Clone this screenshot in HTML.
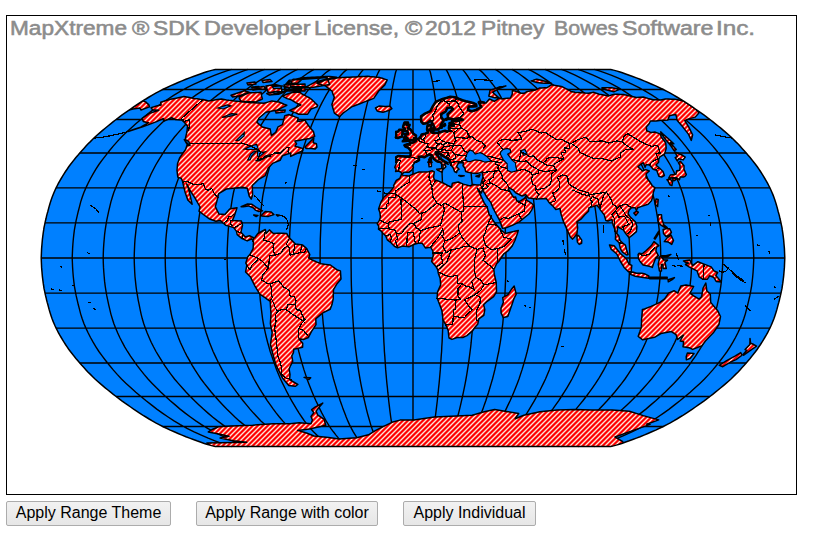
<!DOCTYPE html>
<html><head><meta charset="utf-8">
<style>
html,body{margin:0;padding:0;background:#fff;width:814px;height:537px;overflow:hidden;}
#box{position:absolute;left:6px;top:15px;width:789px;height:478px;border:1px solid #000;background:#fff;}
#title{position:absolute;left:0;top:17px;font-family:"Liberation Sans",sans-serif;font-weight:normal;-webkit-text-stroke:0.55px #8c8c8c;font-size:20px;color:#8c8c8c;white-space:nowrap;}
svg{position:absolute;left:0;top:0;}
.btn{position:absolute;top:501px;height:23px;border:1px solid #acacac;border-radius:2px;background:linear-gradient(#f2f2f2,#e6e6e6);font-family:"Liberation Sans",sans-serif;font-size:16px;color:#000;box-sizing:content-box;line-height:21px;text-align:center;white-space:nowrap;}
</style></head><body>
<div id="box"></div>
<svg width="814" height="537" viewBox="0 0 814 537">
<defs>
<pattern id="hatch" patternUnits="userSpaceOnUse" x="1" y="0" width="5" height="5">
<rect width="5" height="5" fill="#ff0000"/>
<path d="M0,5 L5,0 M-1,1 L1,-1 M4,6 L6,4" stroke="#ffe6d8" stroke-width="1.35"/>
</pattern>
<clipPath id="mapclip"><path d="M610.8,69.4 613.5,70.1 616.3,70.9 619.3,71.8 622.4,72.8 625.7,74 629.2,75.2 632.7,76.5 636.4,77.9 640.1,79.3 644,80.9 647.9,82.5 651.8,84.2 655.7,85.9 659.5,87.7 663.3,89.5 666.9,91.4 670.3,93.2 673.7,95.1 676.9,97 680.1,99 683.3,100.9 686.4,102.9 689.4,104.9 692.4,106.9 695.4,109 698.4,111.1 701.3,113.1 704.2,115.2 707.1,117.4 709.9,119.5 712.7,121.6 715.4,123.8 718.1,126 720.8,128.2 723.4,130.4 726,132.6 728.5,134.8 731,137 733.3,139.3 735.6,141.6 737.9,143.8 740,146.1 742.1,148.4 744.2,150.7 746.2,153 748.1,155.3 750.1,157.6 752,159.9 753.8,162.2 755.6,164.5 757.3,166.8 758.9,169.2 760.5,171.5 762,173.8 763.4,176.2 764.8,178.5 766.2,180.8 767.5,183.2 768.7,185.5 769.9,187.9 771,190.2 772,192.5 773,194.9 773.9,197.2 774.7,199.5 775.5,201.9 776.2,204.2 776.9,206.6 777.5,208.9 778.1,211.2 778.8,213.6 779.4,215.9 779.9,218.3 780.5,220.6 781,222.9 781.5,225.3 782,227.6 782.3,229.9 782.7,232.3 783,234.6 783.3,237 783.6,239.3 783.8,241.6 784,244 784.2,246.3 784.4,248.6 784.5,251 784.6,253.3 784.7,255.7 784.8,258 784.7,260.3 784.6,262.7 784.5,265 784.4,267.4 784.2,269.7 784,272 783.8,274.4 783.6,276.7 783.3,279 783,281.4 782.7,283.7 782.3,286.1 782,288.4 781.5,290.7 781,293.1 780.5,295.4 779.9,297.7 779.4,300.1 778.8,302.4 778.1,304.8 777.5,307.1 776.9,309.4 776.2,311.8 775.5,314.1 774.7,316.5 773.9,318.8 773,321.1 772,323.5 771,325.8 769.9,328.1 768.7,330.5 767.5,332.8 766.2,335.2 764.8,337.5 763.4,339.8 762,342.2 760.5,344.5 758.9,346.8 757.3,349.2 755.6,351.5 753.8,353.8 752,356.1 750.1,358.4 748.1,360.7 746.2,363 744.2,365.3 742.1,367.6 740,369.9 737.9,372.2 735.6,374.4 733.3,376.7 731,379 728.5,381.2 726,383.4 723.4,385.6 720.8,387.8 718.1,390 715.4,392.2 712.7,394.4 709.9,396.5 707.1,398.6 704.2,400.8 701.3,402.9 698.4,404.9 695.4,407 692.4,409.1 689.4,411.1 686.4,413.1 683.3,415.1 680.1,417 676.9,419 673.7,420.9 670.3,422.8 666.9,424.6 663.3,426.5 659.5,428.3 655.7,430.1 651.8,431.8 647.9,433.5 644,435.1 640.1,436.7 636.4,438.1 632.7,439.5 629.2,440.8 625.7,442 622.4,443.2 619.3,444.2 616.3,445.1 613.5,445.9 610.8,446.6 215.2,446.6 212.5,445.9 209.7,445.1 206.7,444.2 203.6,443.2 200.3,442 196.8,440.8 193.3,439.5 189.6,438.1 185.9,436.7 182,435.1 178.1,433.5 174.2,431.8 170.3,430.1 166.5,428.3 162.7,426.5 159.1,424.6 155.7,422.8 152.3,420.9 149.1,419 145.9,417 142.7,415.1 139.6,413.1 136.6,411.1 133.6,409.1 130.6,407 127.6,404.9 124.7,402.9 121.8,400.8 118.9,398.6 116.1,396.5 113.3,394.4 110.6,392.2 107.9,390 105.2,387.8 102.6,385.6 100,383.4 97.5,381.2 95,379 92.7,376.7 90.4,374.4 88.1,372.2 86,369.9 83.9,367.6 81.8,365.3 79.8,363 77.9,360.7 75.9,358.4 74,356.1 72.2,353.8 70.4,351.5 68.7,349.2 67.1,346.8 65.5,344.5 64,342.2 62.6,339.8 61.2,337.5 59.8,335.2 58.5,332.8 57.3,330.5 56.1,328.1 55,325.8 54,323.5 53,321.1 52.1,318.8 51.3,316.5 50.5,314.1 49.8,311.8 49.1,309.4 48.5,307.1 47.9,304.8 47.2,302.4 46.6,300.1 46.1,297.7 45.5,295.4 45,293.1 44.5,290.7 44,288.4 43.7,286.1 43.3,283.7 43,281.4 42.7,279 42.4,276.7 42.2,274.4 42,272 41.8,269.7 41.6,267.4 41.5,265 41.4,262.7 41.3,260.3 41.2,258 41.3,255.7 41.4,253.3 41.5,251 41.6,248.6 41.8,246.3 42,244 42.2,241.6 42.4,239.3 42.7,237 43,234.6 43.3,232.3 43.7,229.9 44,227.6 44.5,225.3 45,222.9 45.5,220.6 46.1,218.3 46.6,215.9 47.2,213.6 47.9,211.2 48.5,208.9 49.1,206.6 49.8,204.2 50.5,201.9 51.3,199.5 52.1,197.2 53,194.9 54,192.5 55,190.2 56.1,187.9 57.3,185.5 58.5,183.2 59.8,180.8 61.2,178.5 62.6,176.2 64,173.8 65.5,171.5 67.1,169.2 68.7,166.8 70.4,164.5 72.2,162.2 74,159.9 75.9,157.6 77.9,155.3 79.8,153 81.8,150.7 83.9,148.4 86,146.1 88.1,143.8 90.4,141.6 92.7,139.3 95,137 97.5,134.8 100,132.6 102.6,130.4 105.2,128.2 107.9,126 110.6,123.8 113.3,121.6 116.1,119.5 118.9,117.4 121.8,115.2 124.7,113.1 127.6,111.1 130.6,109 133.6,106.9 136.6,104.9 139.6,102.9 142.7,100.9 145.9,99 149.1,97 152.3,95.1 155.7,93.2 159.1,91.4 162.7,89.5 166.5,87.7 170.3,85.9 174.2,84.2 178.1,82.5 182,80.9 185.9,79.3 189.6,77.9 193.3,76.5 196.8,75.2 200.3,74 203.6,72.8 206.7,71.8 209.7,70.9 212.5,70.1 215.2,69.4Z"/></clipPath>
<clipPath id="eurclip"><rect x="395" y="88" width="90" height="75"/></clipPath>
</defs>
<path d="M610.8,69.4 613.5,70.1 616.3,70.9 619.3,71.8 622.4,72.8 625.7,74 629.2,75.2 632.7,76.5 636.4,77.9 640.1,79.3 644,80.9 647.9,82.5 651.8,84.2 655.7,85.9 659.5,87.7 663.3,89.5 666.9,91.4 670.3,93.2 673.7,95.1 676.9,97 680.1,99 683.3,100.9 686.4,102.9 689.4,104.9 692.4,106.9 695.4,109 698.4,111.1 701.3,113.1 704.2,115.2 707.1,117.4 709.9,119.5 712.7,121.6 715.4,123.8 718.1,126 720.8,128.2 723.4,130.4 726,132.6 728.5,134.8 731,137 733.3,139.3 735.6,141.6 737.9,143.8 740,146.1 742.1,148.4 744.2,150.7 746.2,153 748.1,155.3 750.1,157.6 752,159.9 753.8,162.2 755.6,164.5 757.3,166.8 758.9,169.2 760.5,171.5 762,173.8 763.4,176.2 764.8,178.5 766.2,180.8 767.5,183.2 768.7,185.5 769.9,187.9 771,190.2 772,192.5 773,194.9 773.9,197.2 774.7,199.5 775.5,201.9 776.2,204.2 776.9,206.6 777.5,208.9 778.1,211.2 778.8,213.6 779.4,215.9 779.9,218.3 780.5,220.6 781,222.9 781.5,225.3 782,227.6 782.3,229.9 782.7,232.3 783,234.6 783.3,237 783.6,239.3 783.8,241.6 784,244 784.2,246.3 784.4,248.6 784.5,251 784.6,253.3 784.7,255.7 784.8,258 784.7,260.3 784.6,262.7 784.5,265 784.4,267.4 784.2,269.7 784,272 783.8,274.4 783.6,276.7 783.3,279 783,281.4 782.7,283.7 782.3,286.1 782,288.4 781.5,290.7 781,293.1 780.5,295.4 779.9,297.7 779.4,300.1 778.8,302.4 778.1,304.8 777.5,307.1 776.9,309.4 776.2,311.8 775.5,314.1 774.7,316.5 773.9,318.8 773,321.1 772,323.5 771,325.8 769.9,328.1 768.7,330.5 767.5,332.8 766.2,335.2 764.8,337.5 763.4,339.8 762,342.2 760.5,344.5 758.9,346.8 757.3,349.2 755.6,351.5 753.8,353.8 752,356.1 750.1,358.4 748.1,360.7 746.2,363 744.2,365.3 742.1,367.6 740,369.9 737.9,372.2 735.6,374.4 733.3,376.7 731,379 728.5,381.2 726,383.4 723.4,385.6 720.8,387.8 718.1,390 715.4,392.2 712.7,394.4 709.9,396.5 707.1,398.6 704.2,400.8 701.3,402.9 698.4,404.9 695.4,407 692.4,409.1 689.4,411.1 686.4,413.1 683.3,415.1 680.1,417 676.9,419 673.7,420.9 670.3,422.8 666.9,424.6 663.3,426.5 659.5,428.3 655.7,430.1 651.8,431.8 647.9,433.5 644,435.1 640.1,436.7 636.4,438.1 632.7,439.5 629.2,440.8 625.7,442 622.4,443.2 619.3,444.2 616.3,445.1 613.5,445.9 610.8,446.6 215.2,446.6 212.5,445.9 209.7,445.1 206.7,444.2 203.6,443.2 200.3,442 196.8,440.8 193.3,439.5 189.6,438.1 185.9,436.7 182,435.1 178.1,433.5 174.2,431.8 170.3,430.1 166.5,428.3 162.7,426.5 159.1,424.6 155.7,422.8 152.3,420.9 149.1,419 145.9,417 142.7,415.1 139.6,413.1 136.6,411.1 133.6,409.1 130.6,407 127.6,404.9 124.7,402.9 121.8,400.8 118.9,398.6 116.1,396.5 113.3,394.4 110.6,392.2 107.9,390 105.2,387.8 102.6,385.6 100,383.4 97.5,381.2 95,379 92.7,376.7 90.4,374.4 88.1,372.2 86,369.9 83.9,367.6 81.8,365.3 79.8,363 77.9,360.7 75.9,358.4 74,356.1 72.2,353.8 70.4,351.5 68.7,349.2 67.1,346.8 65.5,344.5 64,342.2 62.6,339.8 61.2,337.5 59.8,335.2 58.5,332.8 57.3,330.5 56.1,328.1 55,325.8 54,323.5 53,321.1 52.1,318.8 51.3,316.5 50.5,314.1 49.8,311.8 49.1,309.4 48.5,307.1 47.9,304.8 47.2,302.4 46.6,300.1 46.1,297.7 45.5,295.4 45,293.1 44.5,290.7 44,288.4 43.7,286.1 43.3,283.7 43,281.4 42.7,279 42.4,276.7 42.2,274.4 42,272 41.8,269.7 41.6,267.4 41.5,265 41.4,262.7 41.3,260.3 41.2,258 41.3,255.7 41.4,253.3 41.5,251 41.6,248.6 41.8,246.3 42,244 42.2,241.6 42.4,239.3 42.7,237 43,234.6 43.3,232.3 43.7,229.9 44,227.6 44.5,225.3 45,222.9 45.5,220.6 46.1,218.3 46.6,215.9 47.2,213.6 47.9,211.2 48.5,208.9 49.1,206.6 49.8,204.2 50.5,201.9 51.3,199.5 52.1,197.2 53,194.9 54,192.5 55,190.2 56.1,187.9 57.3,185.5 58.5,183.2 59.8,180.8 61.2,178.5 62.6,176.2 64,173.8 65.5,171.5 67.1,169.2 68.7,166.8 70.4,164.5 72.2,162.2 74,159.9 75.9,157.6 77.9,155.3 79.8,153 81.8,150.7 83.9,148.4 86,146.1 88.1,143.8 90.4,141.6 92.7,139.3 95,137 97.5,134.8 100,132.6 102.6,130.4 105.2,128.2 107.9,126 110.6,123.8 113.3,121.6 116.1,119.5 118.9,117.4 121.8,115.2 124.7,113.1 127.6,111.1 130.6,109 133.6,106.9 136.6,104.9 139.6,102.9 142.7,100.9 145.9,99 149.1,97 152.3,95.1 155.7,93.2 159.1,91.4 162.7,89.5 166.5,87.7 170.3,85.9 174.2,84.2 178.1,82.5 182,80.9 185.9,79.3 189.6,77.9 193.3,76.5 196.8,75.2 200.3,74 203.6,72.8 206.7,71.8 209.7,70.9 212.5,70.1 215.2,69.4Z" fill="#0080ff" stroke="none"/>
<path d="M231.6,446.6 226.7,445.1 221,443.2 214.9,440.8 208.2,438.1 201.3,435.1 194.1,431.8 187,428.3 180.3,424.6 174,420.9 168.1,417 162.4,413.1 156.8,409.1 151.4,404.9 146.1,400.8 140.9,396.5 135.8,392.2 130.9,387.8 126.1,383.4 121.5,379 117.2,374.4 113.2,369.9 109.4,365.3 105.8,360.7 102.3,356.1 98.9,351.5 95.9,346.8 93.1,342.2 90.5,337.5 88.1,332.8 85.9,328.1 83.9,323.5 82.2,318.8 80.7,314.1 79.5,309.4 78.3,304.8 77.2,300.1 76.1,295.4 75.2,290.7 74.4,286.1 73.8,281.4 73.3,276.7 72.9,272 72.6,267.4 72.4,262.7 72.2,258 72.4,253.3 72.6,248.6 72.9,244 73.3,239.3 73.8,234.6 74.4,229.9 75.2,225.3 76.1,220.6 77.2,215.9 78.3,211.2 79.5,206.6 80.7,201.9 82.2,197.2 83.9,192.5 85.9,187.9 88.1,183.2 90.5,178.5 93.1,173.8 95.9,169.2 98.9,164.5 102.3,159.9 105.8,155.3 109.4,150.7 113.2,146.1 117.2,141.6 121.5,137 126.1,132.6 130.9,128.2 135.8,123.8 140.9,119.5 146.1,115.2 151.4,111.1 156.8,106.9 162.4,102.9 168.1,99 174,95.1 180.3,91.4 187,87.7 194.1,84.2 201.3,80.9 208.2,77.9 214.9,75.2 221,72.8 226.7,70.9 231.6,69.4 M248.1,446.6 243.6,445.1 238.5,443.2 232.9,440.8 226.9,438.1 220.5,435.1 214,431.8 207.6,428.3 201.5,424.6 195.8,420.9 190.4,417 185.2,413.1 180.1,409.1 175.2,404.9 170.3,400.8 165.6,396.5 161,392.2 156.5,387.8 152.2,383.4 148,379 144.1,374.4 140.5,369.9 137,365.3 133.7,360.7 130.5,356.1 127.5,351.5 124.7,346.8 122.2,342.2 119.8,337.5 117.6,332.8 115.6,328.1 113.8,323.5 112.3,318.8 110.9,314.1 109.8,309.4 108.7,304.8 107.7,300.1 106.7,295.4 105.9,290.7 105.2,286.1 104.6,281.4 104.2,276.7 103.8,272 103.5,267.4 103.3,262.7 103.2,258 103.3,253.3 103.5,248.6 103.8,244 104.2,239.3 104.6,234.6 105.2,229.9 105.9,225.3 106.7,220.6 107.7,215.9 108.7,211.2 109.8,206.6 110.9,201.9 112.3,197.2 113.8,192.5 115.6,187.9 117.6,183.2 119.8,178.5 122.2,173.8 124.7,169.2 127.5,164.5 130.5,159.9 133.7,155.3 137,150.7 140.5,146.1 144.1,141.6 148,137 152.2,132.6 156.5,128.2 161,123.8 165.6,119.5 170.3,115.2 175.2,111.1 180.1,106.9 185.2,102.9 190.4,99 195.8,95.1 201.5,91.4 207.6,87.7 214,84.2 220.5,80.9 226.9,77.9 232.9,75.2 238.5,72.8 243.6,70.9 248.1,69.4 M264.6,446.6 260.5,445.1 255.9,443.2 250.9,440.8 245.5,438.1 239.8,435.1 233.9,431.8 228.1,428.3 222.6,424.6 217.5,420.9 212.6,417 208,413.1 203.4,409.1 199,404.9 194.6,400.8 190.3,396.5 186.2,392.2 182.2,387.8 178.3,383.4 174.5,379 171,374.4 167.7,369.9 164.6,365.3 161.6,360.7 158.8,356.1 156,351.5 153.5,346.8 151.2,342.2 149.1,337.5 147.1,332.8 145.3,328.1 143.7,323.5 142.3,318.8 141.1,314.1 140.1,309.4 139.2,304.8 138.2,300.1 137.4,295.4 136.6,290.7 136,286.1 135.5,281.4 135,276.7 134.7,272 134.5,267.4 134.3,262.7 134.2,258 134.3,253.3 134.5,248.6 134.7,244 135,239.3 135.5,234.6 136,229.9 136.6,225.3 137.4,220.6 138.2,215.9 139.2,211.2 140.1,206.6 141.1,201.9 142.3,197.2 143.7,192.5 145.3,187.9 147.1,183.2 149.1,178.5 151.2,173.8 153.5,169.2 156,164.5 158.8,159.9 161.6,155.3 164.6,150.7 167.7,146.1 171,141.6 174.5,137 178.3,132.6 182.2,128.2 186.2,123.8 190.3,119.5 194.6,115.2 199,111.1 203.4,106.9 208,102.9 212.6,99 217.5,95.1 222.6,91.4 228.1,87.7 233.9,84.2 239.8,80.9 245.5,77.9 250.9,75.2 255.9,72.8 260.5,70.9 264.6,69.4 M281.1,446.6 277.5,445.1 273.4,443.2 268.9,440.8 264.1,438.1 259,435.1 253.8,431.8 248.6,428.3 243.8,424.6 239.2,420.9 234.9,417 230.8,413.1 226.7,409.1 222.8,404.9 218.9,400.8 215.1,396.5 211.4,392.2 207.8,387.8 204.3,383.4 201,379 197.9,374.4 195,369.9 192.2,365.3 189.6,360.7 187,356.1 184.6,351.5 182.4,346.8 180.3,342.2 178.4,337.5 176.7,332.8 175.1,328.1 173.7,323.5 172.4,318.8 171.3,314.1 170.4,309.4 169.6,304.8 168.8,300.1 168,295.4 167.3,290.7 166.8,286.1 166.3,281.4 165.9,276.7 165.6,272 165.4,267.4 165.3,262.7 165.2,258 165.3,253.3 165.4,248.6 165.6,244 165.9,239.3 166.3,234.6 166.8,229.9 167.3,225.3 168,220.6 168.8,215.9 169.6,211.2 170.4,206.6 171.3,201.9 172.4,197.2 173.7,192.5 175.1,187.9 176.7,183.2 178.4,178.5 180.3,173.8 182.4,169.2 184.6,164.5 187,159.9 189.6,155.3 192.2,150.7 195,146.1 197.9,141.6 201,137 204.3,132.6 207.8,128.2 211.4,123.8 215.1,119.5 218.9,115.2 222.8,111.1 226.7,106.9 230.8,102.9 234.9,99 239.2,95.1 243.8,91.4 248.6,87.7 253.8,84.2 259,80.9 264.1,77.9 268.9,75.2 273.4,72.8 277.5,70.9 281.1,69.4 M297.6,446.6 294.4,445.1 290.8,443.2 286.9,440.8 282.7,438.1 278.3,435.1 273.7,431.8 269.2,428.3 264.9,424.6 260.9,420.9 257.2,417 253.5,413.1 250,409.1 246.5,404.9 243.1,400.8 239.8,396.5 236.6,392.2 233.5,387.8 230.4,383.4 227.5,379 224.8,374.4 222.2,369.9 219.8,365.3 217.5,360.7 215.3,356.1 213.1,351.5 211.2,346.8 209.4,342.2 207.8,337.5 206.2,332.8 204.8,328.1 203.6,323.5 202.5,318.8 201.6,314.1 200.7,309.4 200,304.8 199.3,300.1 198.6,295.4 198,290.7 197.5,286.1 197.1,281.4 196.8,276.7 196.6,272 196.4,267.4 196.2,262.7 196.1,258 196.2,253.3 196.4,248.6 196.6,244 196.8,239.3 197.1,234.6 197.5,229.9 198,225.3 198.6,220.6 199.3,215.9 200,211.2 200.7,206.6 201.6,201.9 202.5,197.2 203.6,192.5 204.8,187.9 206.2,183.2 207.8,178.5 209.4,173.8 211.2,169.2 213.1,164.5 215.3,159.9 217.5,155.3 219.8,150.7 222.2,146.1 224.8,141.6 227.5,137 230.4,132.6 233.5,128.2 236.6,123.8 239.8,119.5 243.1,115.2 246.5,111.1 250,106.9 253.5,102.9 257.2,99 260.9,95.1 264.9,91.4 269.2,87.7 273.7,84.2 278.3,80.9 282.7,77.9 286.9,75.2 290.8,72.8 294.4,70.9 297.6,69.4 M314.1,446.6 311.4,445.1 308.3,443.2 304.9,440.8 301.3,438.1 297.5,435.1 293.6,431.8 289.7,428.3 286.1,424.6 282.7,420.9 279.4,417 276.3,413.1 273.3,409.1 270.3,404.9 267.4,400.8 264.6,396.5 261.8,392.2 259.1,387.8 256.5,383.4 254,379 251.7,374.4 249.5,369.9 247.4,365.3 245.4,360.7 243.5,356.1 241.7,351.5 240,346.8 238.5,342.2 237.1,337.5 235.8,332.8 234.6,328.1 233.5,323.5 232.6,318.8 231.8,314.1 231.1,309.4 230.4,304.8 229.8,300.1 229.2,295.4 228.7,290.7 228.3,286.1 228,281.4 227.7,276.7 227.5,272 227.3,267.4 227.2,262.7 227.1,258 227.2,253.3 227.3,248.6 227.5,244 227.7,239.3 228,234.6 228.3,229.9 228.7,225.3 229.2,220.6 229.8,215.9 230.4,211.2 231.1,206.6 231.8,201.9 232.6,197.2 233.5,192.5 234.6,187.9 235.8,183.2 237.1,178.5 238.5,173.8 240,169.2 241.7,164.5 243.5,159.9 245.4,155.3 247.4,150.7 249.5,146.1 251.7,141.6 254,137 256.5,132.6 259.1,128.2 261.8,123.8 264.6,119.5 267.4,115.2 270.3,111.1 273.3,106.9 276.3,102.9 279.4,99 282.7,95.1 286.1,91.4 289.7,87.7 293.6,84.2 297.5,80.9 301.3,77.9 304.9,75.2 308.3,72.8 311.4,70.9 314.1,69.4 M330.6,446.6 328.3,445.1 325.7,443.2 322.9,440.8 319.9,438.1 316.8,435.1 313.5,431.8 310.3,428.3 307.2,424.6 304.4,420.9 301.7,417 299.1,413.1 296.6,409.1 294.1,404.9 291.7,400.8 289.3,396.5 287,392.2 284.8,387.8 282.6,383.4 280.5,379 278.6,374.4 276.7,369.9 275,365.3 273.4,360.7 271.8,356.1 270.2,351.5 268.9,346.8 267.6,342.2 266.4,337.5 265.3,332.8 264.3,328.1 263.4,323.5 262.6,318.8 262,314.1 261.4,309.4 260.9,304.8 260.3,300.1 259.9,295.4 259.5,290.7 259.1,286.1 258.8,281.4 258.6,276.7 258.4,272 258.3,267.4 258.2,262.7 258.1,258 258.2,253.3 258.3,248.6 258.4,244 258.6,239.3 258.8,234.6 259.1,229.9 259.5,225.3 259.9,220.6 260.3,215.9 260.9,211.2 261.4,206.6 262,201.9 262.6,197.2 263.4,192.5 264.3,187.9 265.3,183.2 266.4,178.5 267.6,173.8 268.9,169.2 270.2,164.5 271.8,159.9 273.4,155.3 275,150.7 276.7,146.1 278.6,141.6 280.5,137 282.6,132.6 284.8,128.2 287,123.8 289.3,119.5 291.7,115.2 294.1,111.1 296.6,106.9 299.1,102.9 301.7,99 304.4,95.1 307.2,91.4 310.3,87.7 313.5,84.2 316.8,80.9 319.9,77.9 322.9,75.2 325.7,72.8 328.3,70.9 330.6,69.4 M347.1,446.6 345.2,445.1 343.2,443.2 340.9,440.8 338.5,438.1 336,435.1 333.4,431.8 330.8,428.3 328.4,424.6 326.1,420.9 324,417 321.9,413.1 319.9,409.1 317.9,404.9 315.9,400.8 314,396.5 312.2,392.2 310.4,387.8 308.7,383.4 307,379 305.5,374.4 304,369.9 302.6,365.3 301.3,360.7 300,356.1 298.8,351.5 297.7,346.8 296.7,342.2 295.7,337.5 294.8,332.8 294,328.1 293.3,323.5 292.7,318.8 292.2,314.1 291.7,309.4 291.3,304.8 290.9,300.1 290.5,295.4 290.2,290.7 289.9,286.1 289.7,281.4 289.5,276.7 289.3,272 289.2,267.4 289.1,262.7 289.1,258 289.1,253.3 289.2,248.6 289.3,244 289.5,239.3 289.7,234.6 289.9,229.9 290.2,225.3 290.5,220.6 290.9,215.9 291.3,211.2 291.7,206.6 292.2,201.9 292.7,197.2 293.3,192.5 294,187.9 294.8,183.2 295.7,178.5 296.7,173.8 297.7,169.2 298.8,164.5 300,159.9 301.3,155.3 302.6,150.7 304,146.1 305.5,141.6 307,137 308.7,132.6 310.4,128.2 312.2,123.8 314,119.5 315.9,115.2 317.9,111.1 319.9,106.9 321.9,102.9 324,99 326.1,95.1 328.4,91.4 330.8,87.7 333.4,84.2 336,80.9 338.5,77.9 340.9,75.2 343.2,72.8 345.2,70.9 347.1,69.4 M363.5,446.6 362.2,445.1 360.6,443.2 359,440.8 357.2,438.1 355.3,435.1 353.3,431.8 351.4,428.3 349.5,424.6 347.8,420.9 346.2,417 344.7,413.1 343.1,409.1 341.7,404.9 340.2,400.8 338.8,396.5 337.4,392.2 336.1,387.8 334.8,383.4 333.5,379 332.3,374.4 331.2,369.9 330.2,365.3 329.2,360.7 328.3,356.1 327.3,351.5 326.5,346.8 325.7,342.2 325,337.5 324.4,332.8 323.8,328.1 323.2,323.5 322.8,318.8 322.4,314.1 322,309.4 321.7,304.8 321.4,300.1 321.1,295.4 320.9,290.7 320.7,286.1 320.5,281.4 320.3,276.7 320.2,272 320.2,267.4 320.1,262.7 320.1,258 320.1,253.3 320.2,248.6 320.2,244 320.3,239.3 320.5,234.6 320.7,229.9 320.9,225.3 321.1,220.6 321.4,215.9 321.7,211.2 322,206.6 322.4,201.9 322.8,197.2 323.2,192.5 323.8,187.9 324.4,183.2 325,178.5 325.7,173.8 326.5,169.2 327.3,164.5 328.3,159.9 329.2,155.3 330.2,150.7 331.2,146.1 332.3,141.6 333.5,137 334.8,132.6 336.1,128.2 337.4,123.8 338.8,119.5 340.2,115.2 341.7,111.1 343.1,106.9 344.7,102.9 346.2,99 347.8,95.1 349.5,91.4 351.4,87.7 353.3,84.2 355.3,80.9 357.2,77.9 359,75.2 360.6,72.8 362.2,70.9 363.5,69.4 M380,446.6 379.1,445.1 378.1,443.2 377,440.8 375.8,438.1 374.5,435.1 373.2,431.8 371.9,428.3 370.7,424.6 369.6,420.9 368.5,417 367.4,413.1 366.4,409.1 365.4,404.9 364.5,400.8 363.5,396.5 362.6,392.2 361.7,387.8 360.8,383.4 360,379 359.2,374.4 358.5,369.9 357.8,365.3 357.1,360.7 356.5,356.1 355.9,351.5 355.3,346.8 354.8,342.2 354.4,337.5 353.9,332.8 353.5,328.1 353.2,323.5 352.9,318.8 352.6,314.1 352.4,309.4 352.1,304.8 351.9,300.1 351.7,295.4 351.6,290.7 351.4,286.1 351.3,281.4 351.2,276.7 351.2,272 351.1,267.4 351.1,262.7 351,258 351.1,253.3 351.1,248.6 351.2,244 351.2,239.3 351.3,234.6 351.4,229.9 351.6,225.3 351.7,220.6 351.9,215.9 352.1,211.2 352.4,206.6 352.6,201.9 352.9,197.2 353.2,192.5 353.5,187.9 353.9,183.2 354.4,178.5 354.8,173.8 355.3,169.2 355.9,164.5 356.5,159.9 357.1,155.3 357.8,150.7 358.5,146.1 359.2,141.6 360,137 360.8,132.6 361.7,128.2 362.6,123.8 363.5,119.5 364.5,115.2 365.4,111.1 366.4,106.9 367.4,102.9 368.5,99 369.6,95.1 370.7,91.4 371.9,87.7 373.2,84.2 374.5,80.9 375.8,77.9 377,75.2 378.1,72.8 379.1,70.9 380,69.4 M396.5,446.6 396.1,445.1 395.5,443.2 395,440.8 394.4,438.1 393.8,435.1 393.1,431.8 392.5,428.3 391.8,424.6 391.3,420.9 390.7,417 390.2,413.1 389.7,409.1 389.2,404.9 388.7,400.8 388.3,396.5 387.8,392.2 387.4,387.8 386.9,383.4 386.5,379 386.1,374.4 385.7,369.9 385.4,365.3 385.1,360.7 384.8,356.1 384.4,351.5 384.2,346.8 383.9,342.2 383.7,337.5 383.5,332.8 383.3,328.1 383.1,323.5 382.9,318.8 382.8,314.1 382.7,309.4 382.6,304.8 382.5,300.1 382.4,295.4 382.3,290.7 382.2,286.1 382.2,281.4 382.1,276.7 382.1,272 382.1,267.4 382,262.7 382,258 382,253.3 382.1,248.6 382.1,244 382.1,239.3 382.2,234.6 382.2,229.9 382.3,225.3 382.4,220.6 382.5,215.9 382.6,211.2 382.7,206.6 382.8,201.9 382.9,197.2 383.1,192.5 383.3,187.9 383.5,183.2 383.7,178.5 383.9,173.8 384.2,169.2 384.4,164.5 384.8,159.9 385.1,155.3 385.4,150.7 385.7,146.1 386.1,141.6 386.5,137 386.9,132.6 387.4,128.2 387.8,123.8 388.3,119.5 388.7,115.2 389.2,111.1 389.7,106.9 390.2,102.9 390.7,99 391.3,95.1 391.8,91.4 392.5,87.7 393.1,84.2 393.8,80.9 394.4,77.9 395,75.2 395.5,72.8 396.1,70.9 396.5,69.4 M413,446.6 413,445.1 413,443.2 413,440.8 413,438.1 413,435.1 413,431.8 413,428.3 413,424.6 413,420.9 413,417 413,413.1 413,409.1 413,404.9 413,400.8 413,396.5 413,392.2 413,387.8 413,383.4 413,379 413,374.4 413,369.9 413,365.3 413,360.7 413,356.1 413,351.5 413,346.8 413,342.2 413,337.5 413,332.8 413,328.1 413,323.5 413,318.8 413,314.1 413,309.4 413,304.8 413,300.1 413,295.4 413,290.7 413,286.1 413,281.4 413,276.7 413,272 413,267.4 413,262.7 413,258 413,253.3 413,248.6 413,244 413,239.3 413,234.6 413,229.9 413,225.3 413,220.6 413,215.9 413,211.2 413,206.6 413,201.9 413,197.2 413,192.5 413,187.9 413,183.2 413,178.5 413,173.8 413,169.2 413,164.5 413,159.9 413,155.3 413,150.7 413,146.1 413,141.6 413,137 413,132.6 413,128.2 413,123.8 413,119.5 413,115.2 413,111.1 413,106.9 413,102.9 413,99 413,95.1 413,91.4 413,87.7 413,84.2 413,80.9 413,77.9 413,75.2 413,72.8 413,70.9 413,69.4 M429.5,446.6 429.9,445.1 430.5,443.2 431,440.8 431.6,438.1 432.2,435.1 432.9,431.8 433.5,428.3 434.2,424.6 434.7,420.9 435.3,417 435.8,413.1 436.3,409.1 436.8,404.9 437.3,400.8 437.7,396.5 438.2,392.2 438.6,387.8 439.1,383.4 439.5,379 439.9,374.4 440.3,369.9 440.6,365.3 440.9,360.7 441.2,356.1 441.6,351.5 441.8,346.8 442.1,342.2 442.3,337.5 442.5,332.8 442.7,328.1 442.9,323.5 443.1,318.8 443.2,314.1 443.3,309.4 443.4,304.8 443.5,300.1 443.6,295.4 443.7,290.7 443.8,286.1 443.8,281.4 443.9,276.7 443.9,272 443.9,267.4 444,262.7 444,258 444,253.3 443.9,248.6 443.9,244 443.9,239.3 443.8,234.6 443.8,229.9 443.7,225.3 443.6,220.6 443.5,215.9 443.4,211.2 443.3,206.6 443.2,201.9 443.1,197.2 442.9,192.5 442.7,187.9 442.5,183.2 442.3,178.5 442.1,173.8 441.8,169.2 441.6,164.5 441.2,159.9 440.9,155.3 440.6,150.7 440.3,146.1 439.9,141.6 439.5,137 439.1,132.6 438.6,128.2 438.2,123.8 437.7,119.5 437.3,115.2 436.8,111.1 436.3,106.9 435.8,102.9 435.3,99 434.7,95.1 434.2,91.4 433.5,87.7 432.9,84.2 432.2,80.9 431.6,77.9 431,75.2 430.5,72.8 429.9,70.9 429.5,69.4 M446,446.6 446.9,445.1 447.9,443.2 449,440.8 450.2,438.1 451.5,435.1 452.8,431.8 454.1,428.3 455.3,424.6 456.4,420.9 457.5,417 458.6,413.1 459.6,409.1 460.6,404.9 461.5,400.8 462.5,396.5 463.4,392.2 464.3,387.8 465.2,383.4 466,379 466.8,374.4 467.5,369.9 468.2,365.3 468.9,360.7 469.5,356.1 470.1,351.5 470.7,346.8 471.2,342.2 471.6,337.5 472.1,332.8 472.5,328.1 472.8,323.5 473.1,318.8 473.4,314.1 473.6,309.4 473.9,304.8 474.1,300.1 474.3,295.4 474.4,290.7 474.6,286.1 474.7,281.4 474.8,276.7 474.8,272 474.9,267.4 474.9,262.7 475,258 474.9,253.3 474.9,248.6 474.8,244 474.8,239.3 474.7,234.6 474.6,229.9 474.4,225.3 474.3,220.6 474.1,215.9 473.9,211.2 473.6,206.6 473.4,201.9 473.1,197.2 472.8,192.5 472.5,187.9 472.1,183.2 471.6,178.5 471.2,173.8 470.7,169.2 470.1,164.5 469.5,159.9 468.9,155.3 468.2,150.7 467.5,146.1 466.8,141.6 466,137 465.2,132.6 464.3,128.2 463.4,123.8 462.5,119.5 461.5,115.2 460.6,111.1 459.6,106.9 458.6,102.9 457.5,99 456.4,95.1 455.3,91.4 454.1,87.7 452.8,84.2 451.5,80.9 450.2,77.9 449,75.2 447.9,72.8 446.9,70.9 446,69.4 M462.5,446.6 463.8,445.1 465.4,443.2 467,440.8 468.8,438.1 470.7,435.1 472.7,431.8 474.6,428.3 476.5,424.6 478.2,420.9 479.8,417 481.3,413.1 482.9,409.1 484.3,404.9 485.8,400.8 487.2,396.5 488.6,392.2 489.9,387.8 491.2,383.4 492.5,379 493.7,374.4 494.8,369.9 495.8,365.3 496.8,360.7 497.7,356.1 498.7,351.5 499.5,346.8 500.3,342.2 501,337.5 501.6,332.8 502.2,328.1 502.8,323.5 503.2,318.8 503.6,314.1 504,309.4 504.3,304.8 504.6,300.1 504.9,295.4 505.1,290.7 505.3,286.1 505.5,281.4 505.7,276.7 505.8,272 505.8,267.4 505.9,262.7 505.9,258 505.9,253.3 505.8,248.6 505.8,244 505.7,239.3 505.5,234.6 505.3,229.9 505.1,225.3 504.9,220.6 504.6,215.9 504.3,211.2 504,206.6 503.6,201.9 503.2,197.2 502.8,192.5 502.2,187.9 501.6,183.2 501,178.5 500.3,173.8 499.5,169.2 498.7,164.5 497.7,159.9 496.8,155.3 495.8,150.7 494.8,146.1 493.7,141.6 492.5,137 491.2,132.6 489.9,128.2 488.6,123.8 487.2,119.5 485.8,115.2 484.3,111.1 482.9,106.9 481.3,102.9 479.8,99 478.2,95.1 476.5,91.4 474.6,87.7 472.7,84.2 470.7,80.9 468.8,77.9 467,75.2 465.4,72.8 463.8,70.9 462.5,69.4 M478.9,446.6 480.8,445.1 482.8,443.2 485.1,440.8 487.5,438.1 490,435.1 492.6,431.8 495.2,428.3 497.6,424.6 499.9,420.9 502,417 504.1,413.1 506.1,409.1 508.1,404.9 510.1,400.8 512,396.5 513.8,392.2 515.6,387.8 517.3,383.4 519,379 520.5,374.4 522,369.9 523.4,365.3 524.7,360.7 526,356.1 527.2,351.5 528.3,346.8 529.3,342.2 530.3,337.5 531.2,332.8 532,328.1 532.7,323.5 533.3,318.8 533.8,314.1 534.3,309.4 534.7,304.8 535.1,300.1 535.5,295.4 535.8,290.7 536.1,286.1 536.3,281.4 536.5,276.7 536.7,272 536.8,267.4 536.9,262.7 536.9,258 536.9,253.3 536.8,248.6 536.7,244 536.5,239.3 536.3,234.6 536.1,229.9 535.8,225.3 535.5,220.6 535.1,215.9 534.7,211.2 534.3,206.6 533.8,201.9 533.3,197.2 532.7,192.5 532,187.9 531.2,183.2 530.3,178.5 529.3,173.8 528.3,169.2 527.2,164.5 526,159.9 524.7,155.3 523.4,150.7 522,146.1 520.5,141.6 519,137 517.3,132.6 515.6,128.2 513.8,123.8 512,119.5 510.1,115.2 508.1,111.1 506.1,106.9 504.1,102.9 502,99 499.9,95.1 497.6,91.4 495.2,87.7 492.6,84.2 490,80.9 487.5,77.9 485.1,75.2 482.8,72.8 480.8,70.9 478.9,69.4 M495.4,446.6 497.7,445.1 500.3,443.2 503.1,440.8 506.1,438.1 509.2,435.1 512.5,431.8 515.7,428.3 518.8,424.6 521.6,420.9 524.3,417 526.9,413.1 529.4,409.1 531.9,404.9 534.3,400.8 536.7,396.5 539,392.2 541.2,387.8 543.4,383.4 545.5,379 547.4,374.4 549.3,369.9 551,365.3 552.6,360.7 554.2,356.1 555.8,351.5 557.1,346.8 558.4,342.2 559.6,337.5 560.7,332.8 561.7,328.1 562.6,323.5 563.4,318.8 564,314.1 564.6,309.4 565.1,304.8 565.7,300.1 566.1,295.4 566.5,290.7 566.9,286.1 567.2,281.4 567.4,276.7 567.6,272 567.7,267.4 567.8,262.7 567.9,258 567.8,253.3 567.7,248.6 567.6,244 567.4,239.3 567.2,234.6 566.9,229.9 566.5,225.3 566.1,220.6 565.7,215.9 565.1,211.2 564.6,206.6 564,201.9 563.4,197.2 562.6,192.5 561.7,187.9 560.7,183.2 559.6,178.5 558.4,173.8 557.1,169.2 555.8,164.5 554.2,159.9 552.6,155.3 551,150.7 549.3,146.1 547.4,141.6 545.5,137 543.4,132.6 541.2,128.2 539,123.8 536.7,119.5 534.3,115.2 531.9,111.1 529.4,106.9 526.9,102.9 524.3,99 521.6,95.1 518.8,91.4 515.7,87.7 512.5,84.2 509.2,80.9 506.1,77.9 503.1,75.2 500.3,72.8 497.7,70.9 495.4,69.4 M511.9,446.6 514.6,445.1 517.7,443.2 521.1,440.8 524.7,438.1 528.5,435.1 532.4,431.8 536.3,428.3 539.9,424.6 543.3,420.9 546.6,417 549.7,413.1 552.7,409.1 555.7,404.9 558.6,400.8 561.4,396.5 564.2,392.2 566.9,387.8 569.5,383.4 572,379 574.3,374.4 576.5,369.9 578.6,365.3 580.6,360.7 582.5,356.1 584.3,351.5 586,346.8 587.5,342.2 588.9,337.5 590.2,332.8 591.4,328.1 592.5,323.5 593.4,318.8 594.2,314.1 594.9,309.4 595.6,304.8 596.2,300.1 596.8,295.4 597.3,290.7 597.7,286.1 598,281.4 598.3,276.7 598.5,272 598.7,267.4 598.8,262.7 598.9,258 598.8,253.3 598.7,248.6 598.5,244 598.3,239.3 598,234.6 597.7,229.9 597.3,225.3 596.8,220.6 596.2,215.9 595.6,211.2 594.9,206.6 594.2,201.9 593.4,197.2 592.5,192.5 591.4,187.9 590.2,183.2 588.9,178.5 587.5,173.8 586,169.2 584.3,164.5 582.5,159.9 580.6,155.3 578.6,150.7 576.5,146.1 574.3,141.6 572,137 569.5,132.6 566.9,128.2 564.2,123.8 561.4,119.5 558.6,115.2 555.7,111.1 552.7,106.9 549.7,102.9 546.6,99 543.3,95.1 539.9,91.4 536.3,87.7 532.4,84.2 528.5,80.9 524.7,77.9 521.1,75.2 517.7,72.8 514.6,70.9 511.9,69.4 M528.4,446.6 531.6,445.1 535.2,443.2 539.1,440.8 543.3,438.1 547.7,435.1 552.3,431.8 556.8,428.3 561.1,424.6 565.1,420.9 568.8,417 572.5,413.1 576,409.1 579.5,404.9 582.9,400.8 586.2,396.5 589.4,392.2 592.5,387.8 595.6,383.4 598.5,379 601.2,374.4 603.8,369.9 606.2,365.3 608.5,360.7 610.7,356.1 612.9,351.5 614.8,346.8 616.6,342.2 618.2,337.5 619.8,332.8 621.2,328.1 622.4,323.5 623.5,318.8 624.4,314.1 625.3,309.4 626,304.8 626.7,300.1 627.4,295.4 628,290.7 628.5,286.1 628.9,281.4 629.2,276.7 629.4,272 629.6,267.4 629.8,262.7 629.9,258 629.8,253.3 629.6,248.6 629.4,244 629.2,239.3 628.9,234.6 628.5,229.9 628,225.3 627.4,220.6 626.7,215.9 626,211.2 625.3,206.6 624.4,201.9 623.5,197.2 622.4,192.5 621.2,187.9 619.8,183.2 618.2,178.5 616.6,173.8 614.8,169.2 612.9,164.5 610.7,159.9 608.5,155.3 606.2,150.7 603.8,146.1 601.2,141.6 598.5,137 595.6,132.6 592.5,128.2 589.4,123.8 586.2,119.5 582.9,115.2 579.5,111.1 576,106.9 572.5,102.9 568.8,99 565.1,95.1 561.1,91.4 556.8,87.7 552.3,84.2 547.7,80.9 543.3,77.9 539.1,75.2 535.2,72.8 531.6,70.9 528.4,69.4 M544.9,446.6 548.5,445.1 552.6,443.2 557.1,440.8 561.9,438.1 567,435.1 572.2,431.8 577.4,428.3 582.2,424.6 586.8,420.9 591.1,417 595.2,413.1 599.3,409.1 603.2,404.9 607.1,400.8 610.9,396.5 614.6,392.2 618.2,387.8 621.7,383.4 625,379 628.1,374.4 631,369.9 633.8,365.3 636.4,360.7 639,356.1 641.4,351.5 643.6,346.8 645.7,342.2 647.6,337.5 649.3,332.8 650.9,328.1 652.3,323.5 653.6,318.8 654.7,314.1 655.6,309.4 656.4,304.8 657.2,300.1 658,295.4 658.7,290.7 659.2,286.1 659.7,281.4 660.1,276.7 660.4,272 660.6,267.4 660.7,262.7 660.8,258 660.7,253.3 660.6,248.6 660.4,244 660.1,239.3 659.7,234.6 659.2,229.9 658.7,225.3 658,220.6 657.2,215.9 656.4,211.2 655.6,206.6 654.7,201.9 653.6,197.2 652.3,192.5 650.9,187.9 649.3,183.2 647.6,178.5 645.7,173.8 643.6,169.2 641.4,164.5 639,159.9 636.4,155.3 633.8,150.7 631,146.1 628.1,141.6 625,137 621.7,132.6 618.2,128.2 614.6,123.8 610.9,119.5 607.1,115.2 603.2,111.1 599.3,106.9 595.2,102.9 591.1,99 586.8,95.1 582.2,91.4 577.4,87.7 572.2,84.2 567,80.9 561.9,77.9 557.1,75.2 552.6,72.8 548.5,70.9 544.9,69.4 M561.4,446.6 565.5,445.1 570.1,443.2 575.1,440.8 580.5,438.1 586.2,435.1 592.1,431.8 597.9,428.3 603.4,424.6 608.5,420.9 613.4,417 618,413.1 622.6,409.1 627,404.9 631.4,400.8 635.7,396.5 639.8,392.2 643.8,387.8 647.7,383.4 651.5,379 655,374.4 658.3,369.9 661.4,365.3 664.4,360.7 667.2,356.1 670,351.5 672.5,346.8 674.8,342.2 676.9,337.5 678.9,332.8 680.7,328.1 682.3,323.5 683.7,318.8 684.9,314.1 685.9,309.4 686.8,304.8 687.8,300.1 688.6,295.4 689.4,290.7 690,286.1 690.5,281.4 691,276.7 691.3,272 691.5,267.4 691.7,262.7 691.8,258 691.7,253.3 691.5,248.6 691.3,244 691,239.3 690.5,234.6 690,229.9 689.4,225.3 688.6,220.6 687.8,215.9 686.8,211.2 685.9,206.6 684.9,201.9 683.7,197.2 682.3,192.5 680.7,187.9 678.9,183.2 676.9,178.5 674.8,173.8 672.5,169.2 670,164.5 667.2,159.9 664.4,155.3 661.4,150.7 658.3,146.1 655,141.6 651.5,137 647.7,132.6 643.8,128.2 639.8,123.8 635.7,119.5 631.4,115.2 627,111.1 622.6,106.9 618,102.9 613.4,99 608.5,95.1 603.4,91.4 597.9,87.7 592.1,84.2 586.2,80.9 580.5,77.9 575.1,75.2 570.1,72.8 565.5,70.9 561.4,69.4 M577.9,446.6 582.4,445.1 587.5,443.2 593.1,440.8 599.1,438.1 605.5,435.1 612,431.8 618.4,428.3 624.5,424.6 630.2,420.9 635.6,417 640.8,413.1 645.9,409.1 650.8,404.9 655.7,400.8 660.4,396.5 665,392.2 669.5,387.8 673.8,383.4 678,379 681.9,374.4 685.5,369.9 689,365.3 692.3,360.7 695.5,356.1 698.5,351.5 701.3,346.8 703.8,342.2 706.2,337.5 708.4,332.8 710.4,328.1 712.2,323.5 713.7,318.8 715.1,314.1 716.2,309.4 717.3,304.8 718.3,300.1 719.3,295.4 720.1,290.7 720.8,286.1 721.4,281.4 721.8,276.7 722.2,272 722.5,267.4 722.7,262.7 722.8,258 722.7,253.3 722.5,248.6 722.2,244 721.8,239.3 721.4,234.6 720.8,229.9 720.1,225.3 719.3,220.6 718.3,215.9 717.3,211.2 716.2,206.6 715.1,201.9 713.7,197.2 712.2,192.5 710.4,187.9 708.4,183.2 706.2,178.5 703.8,173.8 701.3,169.2 698.5,164.5 695.5,159.9 692.3,155.3 689,150.7 685.5,146.1 681.9,141.6 678,137 673.8,132.6 669.5,128.2 665,123.8 660.4,119.5 655.7,115.2 650.8,111.1 645.9,106.9 640.8,102.9 635.6,99 630.2,95.1 624.5,91.4 618.4,87.7 612,84.2 605.5,80.9 599.1,77.9 593.1,75.2 587.5,72.8 582.4,70.9 577.9,69.4 M594.4,446.6 599.3,445.1 605,443.2 611.1,440.8 617.8,438.1 624.7,435.1 631.9,431.8 639,428.3 645.7,424.6 652,420.9 657.9,417 663.6,413.1 669.2,409.1 674.6,404.9 679.9,400.8 685.1,396.5 690.2,392.2 695.1,387.8 699.9,383.4 704.5,379 708.8,374.4 712.8,369.9 716.6,365.3 720.2,360.7 723.7,356.1 727.1,351.5 730.1,346.8 732.9,342.2 735.5,337.5 737.9,332.8 740.1,328.1 742.1,323.5 743.8,318.8 745.3,314.1 746.5,309.4 747.7,304.8 748.8,300.1 749.9,295.4 750.8,290.7 751.6,286.1 752.2,281.4 752.7,276.7 753.1,272 753.4,267.4 753.6,262.7 753.8,258 753.6,253.3 753.4,248.6 753.1,244 752.7,239.3 752.2,234.6 751.6,229.9 750.8,225.3 749.9,220.6 748.8,215.9 747.7,211.2 746.5,206.6 745.3,201.9 743.8,197.2 742.1,192.5 740.1,187.9 737.9,183.2 735.5,178.5 732.9,173.8 730.1,169.2 727.1,164.5 723.7,159.9 720.2,155.3 716.6,150.7 712.8,146.1 708.8,141.6 704.5,137 699.9,132.6 695.1,128.2 690.2,123.8 685.1,119.5 679.9,115.2 674.6,111.1 669.2,106.9 663.6,102.9 657.9,99 652,95.1 645.7,91.4 639,87.7 631.9,84.2 624.7,80.9 617.8,77.9 611.1,75.2 605,72.8 599.3,70.9 594.4,69.4 M162.7,426.5 169.7,426.5 176.6,426.5 183.6,426.5 190.5,426.5 197.5,426.5 204.4,426.5 211.4,426.5 218.4,426.5 225.3,426.5 232.3,426.5 239.2,426.5 246.2,426.5 253.1,426.5 260.1,426.5 267,426.5 274,426.5 280.9,426.5 287.9,426.5 294.8,426.5 301.8,426.5 308.7,426.5 315.7,426.5 322.6,426.5 329.6,426.5 336.5,426.5 343.5,426.5 350.4,426.5 357.4,426.5 364.3,426.5 371.3,426.5 378.2,426.5 385.2,426.5 392.1,426.5 399.1,426.5 406,426.5 413,426.5 420,426.5 426.9,426.5 433.9,426.5 440.8,426.5 447.8,426.5 454.7,426.5 461.7,426.5 468.6,426.5 475.6,426.5 482.5,426.5 489.5,426.5 496.4,426.5 503.4,426.5 510.3,426.5 517.3,426.5 524.2,426.5 531.2,426.5 538.1,426.5 545.1,426.5 552,426.5 559,426.5 565.9,426.5 572.9,426.5 579.8,426.5 586.8,426.5 593.7,426.5 600.7,426.5 607.6,426.5 614.6,426.5 621.6,426.5 628.5,426.5 635.5,426.5 642.4,426.5 649.4,426.5 656.3,426.5 663.3,426.5 M116.1,396.5 124.4,396.5 132.6,396.5 140.9,396.5 149.1,396.5 157.4,396.5 165.6,396.5 173.8,396.5 182.1,396.5 190.3,396.5 198.6,396.5 206.8,396.5 215.1,396.5 223.3,396.5 231.6,396.5 239.8,396.5 248.1,396.5 256.3,396.5 264.6,396.5 272.8,396.5 281.1,396.5 289.3,396.5 297.5,396.5 305.8,396.5 314,396.5 322.3,396.5 330.5,396.5 338.8,396.5 347,396.5 355.3,396.5 363.5,396.5 371.8,396.5 380,396.5 388.3,396.5 396.5,396.5 404.8,396.5 413,396.5 421.2,396.5 429.5,396.5 437.7,396.5 446,396.5 454.2,396.5 462.5,396.5 470.7,396.5 479,396.5 487.2,396.5 495.5,396.5 503.7,396.5 512,396.5 520.2,396.5 528.5,396.5 536.7,396.5 544.9,396.5 553.2,396.5 561.4,396.5 569.7,396.5 577.9,396.5 586.2,396.5 594.4,396.5 602.7,396.5 610.9,396.5 619.2,396.5 627.4,396.5 635.7,396.5 643.9,396.5 652.2,396.5 660.4,396.5 668.6,396.5 676.9,396.5 685.1,396.5 693.4,396.5 701.6,396.5 709.9,396.5 M79.8,363 89.1,363 98.3,363 107.6,363 116.9,363 126.1,363 135.4,363 144.6,363 153.9,363 163.1,363 172.4,363 181.6,363 190.9,363 200.1,363 209.4,363 218.7,363 227.9,363 237.2,363 246.4,363 255.7,363 264.9,363 274.2,363 283.4,363 292.7,363 301.9,363 311.2,363 320.5,363 329.7,363 339,363 348.2,363 357.5,363 366.7,363 376,363 385.2,363 394.5,363 403.7,363 413,363 422.3,363 431.5,363 440.8,363 450,363 459.3,363 468.5,363 477.8,363 487,363 496.3,363 505.5,363 514.8,363 524.1,363 533.3,363 542.6,363 551.8,363 561.1,363 570.3,363 579.6,363 588.8,363 598.1,363 607.3,363 616.6,363 625.9,363 635.1,363 644.4,363 653.6,363 662.9,363 672.1,363 681.4,363 690.6,363 699.9,363 709.1,363 718.4,363 727.7,363 736.9,363 746.2,363 M56.1,328.1 66,328.1 75.9,328.1 85.9,328.1 95.8,328.1 105.7,328.1 115.6,328.1 125.5,328.1 135.4,328.1 145.3,328.1 155.3,328.1 165.2,328.1 175.1,328.1 185,328.1 194.9,328.1 204.8,328.1 214.7,328.1 224.6,328.1 234.6,328.1 244.5,328.1 254.4,328.1 264.3,328.1 274.2,328.1 284.1,328.1 294,328.1 304,328.1 313.9,328.1 323.8,328.1 333.7,328.1 343.6,328.1 353.5,328.1 363.4,328.1 373.3,328.1 383.3,328.1 393.2,328.1 403.1,328.1 413,328.1 422.9,328.1 432.8,328.1 442.7,328.1 452.7,328.1 462.6,328.1 472.5,328.1 482.4,328.1 492.3,328.1 502.2,328.1 512.1,328.1 522,328.1 532,328.1 541.9,328.1 551.8,328.1 561.7,328.1 571.6,328.1 581.5,328.1 591.4,328.1 601.4,328.1 611.3,328.1 621.2,328.1 631.1,328.1 641,328.1 650.9,328.1 660.8,328.1 670.7,328.1 680.7,328.1 690.6,328.1 700.5,328.1 710.4,328.1 720.3,328.1 730.2,328.1 740.1,328.1 750.1,328.1 760,328.1 769.9,328.1 M45,293.1 55.2,293.1 65.4,293.1 75.6,293.1 85.9,293.1 96.1,293.1 106.3,293.1 116.5,293.1 126.8,293.1 137,293.1 147.2,293.1 157.4,293.1 167.6,293.1 177.9,293.1 188.1,293.1 198.3,293.1 208.5,293.1 218.8,293.1 229,293.1 239.2,293.1 249.4,293.1 259.7,293.1 269.9,293.1 280.1,293.1 290.3,293.1 300.5,293.1 310.8,293.1 321,293.1 331.2,293.1 341.4,293.1 351.7,293.1 361.9,293.1 372.1,293.1 382.3,293.1 392.6,293.1 402.8,293.1 413,293.1 423.2,293.1 433.4,293.1 443.7,293.1 453.9,293.1 464.1,293.1 474.3,293.1 484.6,293.1 494.8,293.1 505,293.1 515.2,293.1 525.5,293.1 535.7,293.1 545.9,293.1 556.1,293.1 566.3,293.1 576.6,293.1 586.8,293.1 597,293.1 607.2,293.1 617.5,293.1 627.7,293.1 637.9,293.1 648.1,293.1 658.4,293.1 668.6,293.1 678.8,293.1 689,293.1 699.2,293.1 709.5,293.1 719.7,293.1 729.9,293.1 740.1,293.1 750.4,293.1 760.6,293.1 770.8,293.1 781,293.1 M41.2,258 51.6,258 61.9,258 72.2,258 82.6,258 92.9,258 103.2,258 113.5,258 123.9,258 134.2,258 144.5,258 154.8,258 165.2,258 175.5,258 185.8,258 196.1,258 206.5,258 216.8,258 227.1,258 237.5,258 247.8,258 258.1,258 268.4,258 278.8,258 289.1,258 299.4,258 309.7,258 320.1,258 330.4,258 340.7,258 351,258 361.4,258 371.7,258 382,258 392.3,258 402.7,258 413,258 423.3,258 433.7,258 444,258 454.3,258 464.6,258 475,258 485.3,258 495.6,258 505.9,258 516.3,258 526.6,258 536.9,258 547.2,258 557.6,258 567.9,258 578.2,258 588.5,258 598.9,258 609.2,258 619.5,258 629.9,258 640.2,258 650.5,258 660.8,258 671.2,258 681.5,258 691.8,258 702.1,258 712.5,258 722.8,258 733.1,258 743.4,258 753.8,258 764.1,258 774.4,258 784.8,258 M45,222.9 55.2,222.9 65.4,222.9 75.6,222.9 85.9,222.9 96.1,222.9 106.3,222.9 116.5,222.9 126.8,222.9 137,222.9 147.2,222.9 157.4,222.9 167.6,222.9 177.9,222.9 188.1,222.9 198.3,222.9 208.5,222.9 218.8,222.9 229,222.9 239.2,222.9 249.4,222.9 259.7,222.9 269.9,222.9 280.1,222.9 290.3,222.9 300.5,222.9 310.8,222.9 321,222.9 331.2,222.9 341.4,222.9 351.7,222.9 361.9,222.9 372.1,222.9 382.3,222.9 392.6,222.9 402.8,222.9 413,222.9 423.2,222.9 433.4,222.9 443.7,222.9 453.9,222.9 464.1,222.9 474.3,222.9 484.6,222.9 494.8,222.9 505,222.9 515.2,222.9 525.5,222.9 535.7,222.9 545.9,222.9 556.1,222.9 566.3,222.9 576.6,222.9 586.8,222.9 597,222.9 607.2,222.9 617.5,222.9 627.7,222.9 637.9,222.9 648.1,222.9 658.4,222.9 668.6,222.9 678.8,222.9 689,222.9 699.2,222.9 709.5,222.9 719.7,222.9 729.9,222.9 740.1,222.9 750.4,222.9 760.6,222.9 770.8,222.9 781,222.9 M56.1,187.9 66,187.9 75.9,187.9 85.9,187.9 95.8,187.9 105.7,187.9 115.6,187.9 125.5,187.9 135.4,187.9 145.3,187.9 155.3,187.9 165.2,187.9 175.1,187.9 185,187.9 194.9,187.9 204.8,187.9 214.7,187.9 224.6,187.9 234.6,187.9 244.5,187.9 254.4,187.9 264.3,187.9 274.2,187.9 284.1,187.9 294,187.9 304,187.9 313.9,187.9 323.8,187.9 333.7,187.9 343.6,187.9 353.5,187.9 363.4,187.9 373.3,187.9 383.3,187.9 393.2,187.9 403.1,187.9 413,187.9 422.9,187.9 432.8,187.9 442.7,187.9 452.7,187.9 462.6,187.9 472.5,187.9 482.4,187.9 492.3,187.9 502.2,187.9 512.1,187.9 522,187.9 532,187.9 541.9,187.9 551.8,187.9 561.7,187.9 571.6,187.9 581.5,187.9 591.4,187.9 601.4,187.9 611.3,187.9 621.2,187.9 631.1,187.9 641,187.9 650.9,187.9 660.8,187.9 670.7,187.9 680.7,187.9 690.6,187.9 700.5,187.9 710.4,187.9 720.3,187.9 730.2,187.9 740.1,187.9 750.1,187.9 760,187.9 769.9,187.9 M79.8,153 89.1,153 98.3,153 107.6,153 116.9,153 126.1,153 135.4,153 144.6,153 153.9,153 163.1,153 172.4,153 181.6,153 190.9,153 200.1,153 209.4,153 218.7,153 227.9,153 237.2,153 246.4,153 255.7,153 264.9,153 274.2,153 283.4,153 292.7,153 301.9,153 311.2,153 320.5,153 329.7,153 339,153 348.2,153 357.5,153 366.7,153 376,153 385.2,153 394.5,153 403.7,153 413,153 422.3,153 431.5,153 440.8,153 450,153 459.3,153 468.5,153 477.8,153 487,153 496.3,153 505.5,153 514.8,153 524.1,153 533.3,153 542.6,153 551.8,153 561.1,153 570.3,153 579.6,153 588.8,153 598.1,153 607.3,153 616.6,153 625.9,153 635.1,153 644.4,153 653.6,153 662.9,153 672.1,153 681.4,153 690.6,153 699.9,153 709.1,153 718.4,153 727.7,153 736.9,153 746.2,153 M116.1,119.5 124.4,119.5 132.6,119.5 140.9,119.5 149.1,119.5 157.4,119.5 165.6,119.5 173.8,119.5 182.1,119.5 190.3,119.5 198.6,119.5 206.8,119.5 215.1,119.5 223.3,119.5 231.6,119.5 239.8,119.5 248.1,119.5 256.3,119.5 264.6,119.5 272.8,119.5 281.1,119.5 289.3,119.5 297.5,119.5 305.8,119.5 314,119.5 322.3,119.5 330.5,119.5 338.8,119.5 347,119.5 355.3,119.5 363.5,119.5 371.8,119.5 380,119.5 388.3,119.5 396.5,119.5 404.8,119.5 413,119.5 421.2,119.5 429.5,119.5 437.7,119.5 446,119.5 454.2,119.5 462.5,119.5 470.7,119.5 479,119.5 487.2,119.5 495.5,119.5 503.7,119.5 512,119.5 520.2,119.5 528.5,119.5 536.7,119.5 544.9,119.5 553.2,119.5 561.4,119.5 569.7,119.5 577.9,119.5 586.2,119.5 594.4,119.5 602.7,119.5 610.9,119.5 619.2,119.5 627.4,119.5 635.7,119.5 643.9,119.5 652.2,119.5 660.4,119.5 668.6,119.5 676.9,119.5 685.1,119.5 693.4,119.5 701.6,119.5 709.9,119.5 M162.7,89.5 169.7,89.5 176.6,89.5 183.6,89.5 190.5,89.5 197.5,89.5 204.4,89.5 211.4,89.5 218.4,89.5 225.3,89.5 232.3,89.5 239.2,89.5 246.2,89.5 253.1,89.5 260.1,89.5 267,89.5 274,89.5 280.9,89.5 287.9,89.5 294.8,89.5 301.8,89.5 308.7,89.5 315.7,89.5 322.6,89.5 329.6,89.5 336.5,89.5 343.5,89.5 350.4,89.5 357.4,89.5 364.3,89.5 371.3,89.5 378.2,89.5 385.2,89.5 392.1,89.5 399.1,89.5 406,89.5 413,89.5 420,89.5 426.9,89.5 433.9,89.5 440.8,89.5 447.8,89.5 454.7,89.5 461.7,89.5 468.6,89.5 475.6,89.5 482.5,89.5 489.5,89.5 496.4,89.5 503.4,89.5 510.3,89.5 517.3,89.5 524.2,89.5 531.2,89.5 538.1,89.5 545.1,89.5 552,89.5 559,89.5 565.9,89.5 572.9,89.5 579.8,89.5 586.8,89.5 593.7,89.5 600.7,89.5 607.6,89.5 614.6,89.5 621.6,89.5 628.5,89.5 635.5,89.5 642.4,89.5 649.4,89.5 656.3,89.5 663.3,89.5" fill="none" stroke="#000" stroke-width="1.4"/>
<path clip-path="url(#mapclip)" d="M151.1,107.8 156.7,105.9 161.1,104.9 160.7,102.2 170.5,99.3 175,98.4 179.5,97.4 183.9,96.4 186.7,96.9 189.6,97.4 191.8,97.9 194.1,98.4 197.1,98.8 200,99.2 203,99.5 205.9,100.2 208.8,100.9 213.1,100.3 217.3,99.6 221.5,99 224,99.4 226.4,99.9 229,100.3 231.6,100.6 234.3,101 236.9,101.3 240,101.6 243.1,101.9 246.2,102.2 249.3,102.5 252.2,102.7 255.1,102.8 258,103 260.9,103.1 263.8,103.3 267.9,102.1 271.9,100.9 275.2,101.4 278.6,101.9 281.3,103 284,104.2 286.8,105.3 282.1,107.7 277.4,110 273.5,110.8 269.7,111.5 265.8,112.3 259,118 256.9,122.3 259.5,124.6 262.3,126.9 266.2,127.9 270.2,129 271.3,135.7 275.7,132.4 278.1,126.9 282.5,124.7 283.6,120.1 284.8,115.7 289.1,114.6 292.1,115.7 295.1,116.9 298.2,118 297.3,121.6 301.1,120.9 304.8,120.1 307,123.5 309.4,126.9 313.4,131.5 314.7,136.4 310.1,138.4 306.3,139.1 302.5,139.7 298.7,140.4 294.9,141.1 296.6,143.8 294.9,146.1 298.6,147.2 302.4,148.4 302.6,150.7 296.7,153.5 290.7,156.4 290.8,153 286.7,154.3 282.5,155.7 280.1,160.3 272.5,163.4 268.2,168 265.2,175.7 258.3,179.7 252.3,185.5 252.4,190.2 252.6,194.9 251.3,199.1 249.2,196 247.3,188.3 242.7,187.2 235.6,187.9 230.9,188.4 226.3,189 218.7,193.7 216.7,201.9 215.3,206.6 218.9,214 224.9,214.5 229.7,208.9 237,207.7 234.3,215.9 232.3,220.6 236.9,220.8 241.4,221.1 242.5,225.3 240.9,232.3 245.3,237 249.5,235.8 253.5,237.7 254.5,238.1 257.9,233.5 265.3,229.5 266.1,233.5 269.4,229.9 273.3,233.5 277.4,233.3 281.5,233.2 286.6,233.5 289.5,238.1 295.5,244 302.7,245.1 306.7,248.6 309.8,254.5 308.7,258 312.8,260.3 317,262.1 321.1,263.8 325.8,264.4 330.4,265 336.7,269.7 340.4,270.9 341,279 337,283.7 333.5,289.6 333.3,294.2 333.2,298.9 331.9,304.8 330.1,309.4 323.3,312.5 319.5,315.6 315.8,318.8 316,324.6 311.4,331.6 308.4,337.5 303.9,339.4 298.9,338.7 302.7,343.3 302.6,347.3 298.2,348.2 293.8,349.2 293.4,352.6 291.8,355.9 292.7,361.4 290.7,365.3 289.1,369 290,374.4 289.6,379.6 297.8,384.5 295.2,386.3 288.8,385.6 282.7,378.3 279.3,371.7 276,365.1 274.7,360.5 273.4,355.9 271.9,350.2 270.5,344.5 271.3,338.7 272.2,332.8 271.2,328.1 270.4,323.5 270.7,318.8 271,314.1 270.6,307.7 270.2,301.3 265,297.7 259.8,294.2 255,286.1 252.6,281.4 250.3,276.7 245.6,272 246.9,265 245.8,263.1 247.8,256.8 249.9,254.5 253.1,248.6 253.5,241.6 252,238.8 247.2,240.9 242.1,238.6 237.2,234.6 236.4,231.1 233.6,227.6 229.7,226.4 225.7,225.3 220.1,220.4 215.9,221.3 209.1,218.7 204,215 199,211.2 200.1,207 195.2,198.4 189.9,190.2 186.7,183.9 188.6,189 190.5,197.2 192.1,204.2 187.8,200 185.2,192.5 183.2,184.4 182.7,181.8 181.4,178.5 177.8,177.1 177,170.3 177.6,163.4 179.8,157.6 185.6,149.5 187,145.2 190,145.4 188.9,141.6 185.2,139.3 187,131.5 187.5,126 184.7,122.7 181.7,119.9 178.6,119.7 175.5,119.5 171.6,117.8 164,121 163.5,118.4 156.6,121.6 148,124.9 142.6,126.7 137.2,128.6 128.1,131.5 134.4,129.3 140.6,127.1 148.7,122.7 146,122.2 143.3,121.6 142.2,118.4 149,113.6 158.8,110.2 155.8,110.1 152.8,110Z M401.6,174.3 399.7,178.5 396.3,180.4 393.6,185.5 394,186.9 390.1,191.8 386.6,194.9 383.9,197.2 380.8,202.4 378.6,208.9 379.9,212.4 380.4,217.1 379.3,220.6 377.2,223.6 378.8,226.4 378.5,229.2 381.2,231.1 383.2,233.5 385.6,235.8 387.3,239.8 390.3,242.1 394.4,246.3 397.5,247.7 402.7,246.1 408.9,246.8 415.1,244 418.2,243.3 422.3,243.3 425.4,247.9 428.5,247.5 430.9,247.5 432.8,251 433.2,255.7 432.2,259.2 431.6,261.5 435.7,266.2 437.7,269.7 438.3,273.2 440.2,278.6 440.7,284.9 437.6,291.9 437.1,297.7 438.4,301.3 440.2,305.9 441.9,310.6 442.5,315.3 443,320 445.9,324.9 448.2,330.5 448.8,336.3 449.1,338 452,339.4 457,337.5 462.8,337.5 466.9,335.6 472.2,331.2 475.2,327 477.8,323.9 478.8,318.8 483.8,315.3 484.8,309.4 483.6,304.8 487.2,301.3 493.6,296.6 496.5,291.9 496.4,287.2 496.2,282.5 494.4,274.4 493.8,269.7 496.6,263.8 498.7,261.5 501.8,256.8 503.8,253.8 507.9,251 512,246.3 514.9,240.5 517.4,233.5 518.3,230.4 513.6,231.6 509.5,232.5 505.5,233.5 501.3,230.4 498,226.4 494.4,222.5 491.9,218.7 489,214 487.3,207.7 483.9,202.4 480.4,194.9 477.3,188.3 481.3,193 482.5,189.5 486.8,197.2 490.8,202.4 493.1,208.2 496.4,214.5 499.8,220.6 501.4,225.3 502.4,228.3 505.3,228.1 512.3,225.3 519.2,221.8 525,217.1 528.9,214 531.6,210.1 533.8,205.4 530.9,202.8 526.4,199.8 525.8,196.5 524.4,198.4 519.7,201.4 516.6,200.7 515.6,197 513.6,197.2 512,194.9 508.3,189 509.2,187.9 513.4,190.2 515.7,192.8 522.1,196 525.6,194.6 528.4,197.9 532.4,198.5 536.5,199.1 541.5,198.8 546.5,198.6 549,202.4 552.4,205.6 555.8,209.4 560,208.4 560.9,213.6 563.1,220.6 566.4,228.1 570.4,237 572.6,239.1 574.5,237 577,233.5 577.6,227.6 576.9,221.8 580.9,219.2 584.8,214.7 588.5,211.2 589,207.7 592.9,206.6 596.8,205.2 599.1,207.7 600.5,210.1 604.2,214.7 605.9,220.6 608,221.1 611.9,219.4 613.2,225.3 615.1,229.9 615.6,235.8 615.4,239.3 619.1,242.8 620.4,248.6 622.5,252.2 626.7,255 628.1,254.5 626.6,249.8 625.4,245.1 623.2,243.5 620,240.5 618.7,235.8 616.8,233.5 617.9,226.4 619.9,228.1 623.3,229.9 625.7,233.5 629.1,237.7 632,235.3 636.4,231.6 636.9,226.4 635.3,221.8 630.3,217.1 628,213.6 629.1,210.1 631.5,207.7 635.2,207.7 636.4,210.5 637.6,207.7 642.4,206.1 648.1,204.2 651.4,200.7 652.6,197.2 653.3,192.5 654.9,187.9 652.1,185.5 649.9,182 646.1,177.3 646.2,173.8 649.3,171 645.8,169.6 642.5,171 639.3,168 637.9,166.8 640.5,164.5 643.3,162.7 645.1,167.3 646.2,164.5 649.6,165 653.2,169.2 656.7,170.3 658.9,176.2 661.6,177.1 664.4,175.5 663,171.5 659.4,168 655.9,165 658.6,162.2 658.7,159.2 659.8,156.9 664.5,154.1 666.2,148.4 665.7,142.7 661.2,137 660.4,134.1 655.2,132.1 651.2,132.6 646.7,130.8 646.3,127.1 649.1,123.8 650.4,121 656.2,121 661.3,120.3 664.5,120.2 667.7,120.1 668.6,117.9 669.4,115.7 672.7,115.1 675.9,114.6 677.3,120.6 682.9,127.1 688.6,134.4 691.3,140.4 692.6,134.8 688.8,127.1 684.8,120.6 687.9,119.1 691.5,118.1 695,117.1 696.4,115.7 697.7,114.2 699,112.7 695.4,109 689.4,104.9 683.3,100.9 679,100.1 674.8,99.3 671.6,99.2 668.5,99.1 665.3,99 663.1,99.4 660.8,99.9 656.9,99.8 653.1,99.7 648.1,98.4 643.2,97 639.8,97.2 636.4,97.4 632.1,96.4 627.9,95.5 623.6,94.5 620.6,94.4 617.5,94.3 614.5,94.2 612.4,94.8 610.4,95.4 608.3,96.1 603.8,95.1 599.3,94.2 593.3,92.3 591.1,92.7 588.8,93.2 585.3,93 581.8,92.7 578.4,92.5 574.9,92.3 571,91.4 562.5,86.8 558.8,86.1 555.2,85.4 551.6,84.7 550.2,85.7 548.8,86.7 547.2,87.7 544.6,87.8 542,87.9 539.4,88.1 537.6,89 535.7,89.9 532.9,90.4 530.1,90.9 527.2,91.4 524.5,93.2 520.9,93.2 516.8,91.5 512.4,90.4 512.3,94.2 510.4,98 507.6,98.3 504.8,98.6 502,99 499.7,98 497,99.6 494.3,101.3 489.4,99 485.9,102.9 482.7,102.4 479.4,101.9 478.8,102.3 481.3,106.9 478.7,108.5 476.1,110 471.7,111.3 467.9,110 468.8,106.5 472.6,106.4 476.4,106.3 476.1,104.5 473,102.9 469.4,102 465.9,101.2 462.4,100.3 458.6,98.8 454.8,97.2 450.3,96.8 446.5,97.9 442.7,99 439.2,100.4 435.7,101.9 433.1,105.9 430.4,111.1 425,113.6 421.1,116.3 421.3,121.6 423.1,123.6 427.2,123.2 430.4,120.6 432.2,122.7 434.3,127.1 435,129.3 437.4,129.5 440.3,127.7 440.8,124.9 443.7,120.6 441.3,117.4 441.2,114.2 445.6,111.5 447.3,108 451.1,107.3 453,109 450.4,111.6 447.6,114.2 448.3,118.4 453.4,119.3 459,118.4 462.9,119.7 459.4,120.6 455.7,120.9 452.1,121.2 453.3,123.8 453.7,126 449.3,125.3 448.9,128.2 449.6,130.4 447.3,131.7 445,130.8 440.8,131.9 437.4,133 432.1,132.6 430.3,130.8 431,128.2 430.7,124.7 427.4,126 427.1,129.3 428,132.6 425.2,133.7 421.7,134.4 420.9,136.4 419.2,138.4 416.2,139.3 415.7,141.1 413.4,142.5 410.8,142.9 409.8,142.2 410.1,144.7 407.6,144.3 404.5,145.2 405.4,146.5 408.4,147.7 410.8,150.7 410.6,155.3 409.6,156.6 405.5,156.6 401.8,156.3 398.1,156 395.6,157.6 396.4,159.9 396.3,163.4 394.8,167.3 396.1,169.4 395.6,171.5 398.5,171 400.6,172 402.1,173.8 404.3,172.2 409.1,172.2 411.7,170.1 413.4,167.3 412.4,165.7 414.7,162.7 419,160.1 418.6,156.9 421.4,156.6 424.2,157.3 427,155.7 429.3,154.3 432,155.5 433.7,158.7 436.6,161 439.5,162.2 442.9,164.5 443.2,169.2 444.6,168 445.9,166.8 444.6,164.3 445.7,163.4 448.2,164.3 447.1,162.9 443.2,161 442.2,159.9 439.3,158.7 438.2,156.2 435.8,154.1 435.7,152.3 438.3,151.6 438.6,153.4 440.8,154.1 443.8,156.4 447.7,158.7 449.8,160.3 450,163.4 451.5,165.7 453.3,168 454.5,171.5 456.5,172.7 457.3,170.3 459.1,169.2 456.6,166.8 457.7,164.1 459.4,162.4 462.7,162.7 463.4,163.8 463,165.7 464.8,168 465.7,171.5 468.1,172.2 472.1,173.1 476,173.6 478.8,173.1 482.6,172 482.6,175 483,177.3 481.7,181.3 480.7,184.8 476.8,185.1 473.2,184.4 470.3,186 463.3,184.1 458.2,182 452.4,183.2 451.6,187.2 447.6,185.5 443.5,183.2 438.5,181.1 434.6,180.1 433.5,177.3 434.3,172 432.3,170.8 428.5,171.7 422.7,172 418.8,172 413,174.1 409.1,175.9 403.3,175.5Z M404.6,122.5 408,122.5 406.3,124.7 409.6,124.7 408.7,127.1 407.9,128.2 410.3,129.3 412.1,131.7 413.2,133.7 416,135.5 415.7,137.3 413.9,138.2 415.5,138.8 413,139.7 409.8,140.2 406.7,140.9 402.8,141.3 405.5,138.8 407.7,138.2 403.8,137.7 406,135.9 404.8,134.1 407.8,133.9 407.8,132.6 407,130.8 404.4,131 404.8,128.6 403.1,127.1 403.7,124.9 404.3,123.2Z M402.7,129.9 402.5,133.7 401.7,136.6 397.9,137.9 395.3,137.5 396.4,134.4 395.6,132.1 398.3,131.5 399.2,129.9 401,129.7Z M377.3,111.1 375.5,108 379,106.1 382.1,106.3 385.1,106.5 390.1,106.3 391.9,108.6 389.3,110.4 383,112.3 378.8,111.5Z M488.8,96.1 494.8,97.8 498.3,97.4 492.5,92.3 494.6,91 496.6,89.8 498.6,88.6 501.1,87.7 503.6,86.8 506,85.9 503,86.4 500,86.8 497.6,87.7 495.1,88.6 492.6,89.5 490,90.4 489.5,93.2Z M537,82.5 540.8,82.9 544.6,83.3 547.9,83.3 551.1,83.3 547.6,81.7 543.9,80.9 540.2,80.1 536.7,79.3 534.8,79.8 532.9,80.4 531.1,80.9Z M602.1,88.6 607.9,90.2 613.8,91.7 615.8,90.9 617.7,90 619.6,89.1 615.6,88.4 611.6,87.7 608.4,87.7 605.2,87.7 602,87.7Z M674.2,150.7 676.2,149.5 670.2,142.7 673.8,143.8 668.4,138.7 662.7,133.7 660.7,131.9 661.4,133.7 665.4,139.3 671,146.1Z M668.7,178 670.4,175 675.9,174.3 676.7,170.8 679.8,170.3 680.1,165.7 678.4,162.7 680.4,161.3 684,165.7 684,169.2 686.3,174.5 685.2,176.2 683.5,177.1 680.2,177.1 679.4,179.7 676.6,177.8 672.7,177.8Z M677.4,161 678.7,158.7 683.2,159.9 685.2,157.1 681.9,155 674.8,152 677.2,156.4 675.2,157.6Z M667,179.7 670.2,179 672.5,182 671.9,185.5 670,184.8 668.3,181.3Z M673,180.8 672.8,178.5 675.7,178 676.4,179.2 674.8,180.4Z M655.3,204.2 656,199.1 658.2,199.5 657.6,206.6Z M633.8,213.1 636.5,211 638.3,212.2 635.8,215.4Z M658,220.6 658.1,214.7 661.5,214.7 661.8,218.7 663.7,224.8 667.2,227.6 666.2,228.3 661.8,225.7 659.7,224.1Z M663.1,229.5 665.7,228.8 669.8,228.8 671.4,232.3 670,234.6 666,236.5 663.5,233.5Z M654.2,238.4 658.6,231.3 659.3,232.7 655.1,239.1Z M664.3,241.6 667.2,237.9 671,235.1 673.5,240.5 671.7,244.4 668.5,242.1Z M638.1,254.5 639.1,253.3 642.2,253.8 646.2,250.5 651.2,245.8 654,241.6 658.8,245.6 656.4,247.5 655.9,251 658.3,255.7 655.7,258 653.5,263.8 652.3,267.4 649.3,266.2 643.1,265 640.1,261.5 638.5,258.7Z M609.5,244.9 614.1,245.8 620.1,253.3 626.7,259.2 628.7,263.8 631.8,265.5 631.1,271.6 628.4,271.8 624.1,267.4 620.5,261.5 616.8,254 611.1,249.1Z M629.8,273.9 632.5,272 636.6,273.2 641.8,273.2 645.2,274.1 648.8,276 648.6,278.3 641.5,277.2 635.4,276.2 630.4,274.4Z M649.7,277.2 653.9,277.2 658,277.2 662.6,277.2 667.2,277.2 667.1,278.8 662.5,278.8 657.9,278.8 653.7,278.8 649.6,278.8Z M668.1,279.7 674.4,277.6 672.2,279.7 668.3,281.8Z M658.6,266.2 658.2,264.3 659.8,256.8 660.8,255.7 666,255.7 670.9,254.5 667,257.1 661.4,257.1 663.9,260.1 667.6,260.1 664.9,262.2 666.3,268.5 663.2,268.5 662.8,264.3 661.3,264.8 661.5,270.9 659.4,270.9Z M683.5,261 689.7,259.9 692.6,265.7 697.9,261.7 704.1,264.1 711.2,266.9 714,270.9 717.6,272.5 715.8,275.5 721.3,282.1 716.2,281.4 713.6,277.2 709.6,275.8 707.2,279.3 703.1,279.3 699.2,276.9 697.1,270.9 689.5,267.1 685.5,264.5 688.6,263.1 685.5,262.4Z M576.9,234.9 578.8,235.8 581.7,240.2 581.6,243.3 579.2,244.4 577.4,242.1 577.1,238.8Z M514.2,286.1 516.2,294.2 513.8,298.9 511.9,304.8 509.9,310.6 507.8,316.5 503.3,317.6 501.1,312.9 501,308.3 503.4,302.4 502.7,297.7 508,294.7 511.3,289.6Z M432,128.8 434.5,127.9 434.5,129.7 433.4,130.6 432.3,129.9Z M429.8,129.5 431.2,129 431.8,130.1 430.2,130.4Z M443.6,125.5 444.8,124 445.1,125.1 444,126.2Z M441,127.5 441.9,125.1 441.7,127.7Z M449.5,123.2 451.9,122.5 451.3,124 450,123.8Z M445.2,119.5 446.7,118.6 446.5,119.7Z M436.8,169.2 442.9,168.5 442.2,172.2 437.5,170.1Z M428.5,162.2 431.4,162.2 431.4,166.6 429.1,166.8Z M429.2,159.9 430.6,157.6 430.9,161Z M458.7,175.5 464.2,175.7 460.7,176.4Z M475.9,176.2 480,174.8 479.1,177.1Z M642.4,309.4 642.1,314.1 641.6,318.8 641.4,327 639.9,331.6 638.2,336.3 642.7,339.8 648.6,338.5 654.5,337.3 660.9,333.5 666.2,332.6 671.4,331.6 676.1,334.7 677.6,339.4 683.4,335.2 680.2,341 683.7,341.7 683,346.8 689.2,347.8 692.7,349.4 701.9,345.7 705.4,341 713.3,332.8 718.9,324.6 720.5,316.5 717.6,310.6 715.5,308.3 710.7,302.4 710.3,294.2 706.8,290.7 705.8,283 703,288.4 701.7,296.6 699.2,299.1 693.7,295.9 690,293.1 693.6,286.5 686,284.9 680.8,286.1 677.8,293.1 674,290.7 668.6,293.1 664.6,298.9 659.9,302.4 655.5,304.4 651.1,306.4 644.5,309Z M687.4,353.1 694,353.6 690.2,358.4 686.4,359.8 686.2,356.8Z M750,338.4 750.6,343.3 752.7,344 756.5,346.1 751.1,349.9 743.7,355.2 743.3,354.3 746.9,350.3 745.1,349.6 749.9,344.5Z M740.7,352.6 742,355.2 736,359.6 730.8,361.9 722.8,366.7 719.3,365.3 726.7,360.7 735,356.1Z M241.1,206.8 247.6,204 251.6,204.2 256.3,207.3 262.5,210.8 258.8,211.5 255.3,210.1 253.2,207.7 248.3,205.9 243.2,206.8Z M261.4,215.2 265.3,211.5 270.9,211.9 273.9,214.5 268.4,216.4 261.6,215.9Z M253.7,215 258,215.4 256.2,216.6Z M276.3,214.7 279.5,215.2 277.6,216Z M305,147 309.4,142.5 313.8,137.9 313.2,142.7 316.4,143.8 316.9,147.2 315,149.1 311.5,148.4 306,148.4Z M184.3,139.7 186.6,142.6 189.1,145.4 187.1,144.3Z M239.2,97 249,92.8 252,92.7 255.1,92.6 258.1,92.4 261.1,92.3 261.5,95.6 262.4,99 255.9,101.9 253,101.8 250.1,101.7 247.2,101.6 244.3,101.4 241.4,101.3 239.4,99Z M231,95.3 237.8,93 244.5,90.8 246.7,91.5 249,92.3 243.6,94.2 238.1,96.1 232.6,97Z M302.2,94.2 304.6,95.4 307.1,96.7 309.7,98 312.2,99.9 314.8,102.6 317.6,105.3 317.1,106.9 311,109 307.6,114.2 303.1,114.2 298.7,114.2 295.7,112.9 292.7,111.7 289.7,110.4 295.4,107.7 300.9,104.9 298.5,103.9 296.1,102.9 293.7,101.4 291.3,99.9 287.2,98.6 284.8,97.3 282.6,96.1 286.9,94.3 291.3,92.7 295.5,92.3 299.7,91.9Z M290.7,86.8 293.8,86.8 296.9,86.8 300.1,86.8 303.2,86.8 306.3,86.8 316,81.7 319.5,80.9 323.1,80.1 326.6,79.3 330,78.6 333.4,77.9 336.7,77.2 334.4,77 332.1,76.8 329.8,76.6 327.6,76.5 325,76.6 322.4,76.7 319.8,76.9 317.2,77 314.5,77.2 311.9,77.3 309.3,77.4 306.6,77.6 304,77.7 301.3,77.9 296.8,79 292.1,80.1 290.9,83.7Z M284.5,90.1 287.3,90.1 290,90.2 292.7,90.2 295.5,90.3 298.2,90.4 301,90.4 302.6,87.2 299.9,87.1 297.3,87 294.7,86.9 292,86.8 288.7,87.4 285.2,88.1Z M269.6,95.1 274.1,94.6 278.5,94.2 285,91.7 281.5,91.7 278.1,91.6 274.6,91.5 270.7,92.6 266.8,93.6Z M251.4,87.7 253.8,88 256.3,88.3 258.8,88.6 261.3,88.9 263.8,89.2 266.3,89.5 265.1,88 264,86.4 260.9,86.8 257.7,87.1 254.6,87.4Z M273.6,88.6 277.1,88.6 280.5,88.6 282.2,85.9 278.9,86 275.6,86.2 272.3,86.3Z M286.7,83.3 289.3,83.3 292,83.3 294.6,83.3 297.2,83.3 302,79.3 299,79.3 296.1,79.3 293.1,79.3Z M275.4,110.6 278.7,110.4 282,110.2 285.2,110 284.7,112.1 280.4,112.6 276.1,113.1Z M317,83.3 321.5,81.6 325.9,79.9 329.6,79.3 333.3,78.7 336.9,78.1 340.5,77.6 343.5,77.4 346.5,77.3 349.4,77.2 352.4,77 355.3,76.9 358.4,76.7 361.5,76.6 364.5,76.5 367.5,76.3 370,76.6 372.4,76.8 374.9,77.1 377.4,77.3 379.9,77.6 382.3,78.3 384.7,79.1 387.2,79.9 384.8,84.9 378.7,91 373.7,98.4 368.8,100.2 363.9,102.1 359.9,103.7 355.8,105.3 351.7,106.9 347.4,110 343,113.1 339.4,116.7 334.4,113.1 333.1,108.8 331.9,104.5 334.3,97.2 333,94.1 332,91 329.8,89.3 327.7,87.7 325.8,86.1 323.5,85.4 321.3,84.7 319.1,84Z M304.1,377.4 310.7,377.8 309,379.6Z M142.7,100.9 145.7,101.9 147.2,103.4 148.9,104.9 149.4,106.9 140.9,110 139.9,108 132.9,109 129.1,110 135.8,105.4Z M214.2,450 206.9,442.9 246.7,442.2 233.4,440.7 220.1,438 229,436.3 218.7,434.1 208.3,431.9 212.8,429.2 218.7,426.7 231.9,426 252.6,425.2 273.2,423.7 290,423.7 299.2,422.7 311,423.7 312.4,420.1 311,416.4 313.9,412.7 311.7,409.7 315.4,406.8 322.8,403.1 319.8,406.5 316.1,410.9 317.6,414.9 324.2,419.3 325.7,425.2 309.5,428.9 297.7,430.4 306.5,433 313.9,436 328.7,437.5 339,438.9 356.7,437.8 368.5,434.8 375.8,430.4 383.2,426.7 392,422.3 400,420.1 413.8,419.9 434.4,417 456.8,416.1 472.2,415.3 484.3,411.8 494.6,409.6 504.9,411.3 518.7,413.5 515.2,418.7 523.8,415.3 540,411.8 557.2,409.9 574.4,409.6 591.6,409.9 612.2,409.9 629.4,411.3 643.2,415.6 658.7,419.9 646.6,424.2 650,424.4 615,437 622.4,441.4 630,450Z M252,87 259,86.5 260,89 253,90Z M266,86 275,84.5 281,86 282,92 276,93.5 268,92Z M247,83 255,82 256,84 248,85Z M262,80.5 270,79.5 272,81.5 263,82.5Z M284,85 305,84 305,91 285,91Z M289.2,80.3 327,77.6 329.7,84.5 313.5,87.2 294.6,88.5 283.8,86.5Z" fill="url(#hatch)" stroke="#000" stroke-width="1.5" stroke-linejoin="round"/>
<path clip-path="url(#eurclip)" d="M151.1,107.8 156.7,105.9 161.1,104.9 160.7,102.2 170.5,99.3 175,98.4 179.5,97.4 183.9,96.4 186.7,96.9 189.6,97.4 191.8,97.9 194.1,98.4 197.1,98.8 200,99.2 203,99.5 205.9,100.2 208.8,100.9 213.1,100.3 217.3,99.6 221.5,99 224,99.4 226.4,99.9 229,100.3 231.6,100.6 234.3,101 236.9,101.3 240,101.6 243.1,101.9 246.2,102.2 249.3,102.5 252.2,102.7 255.1,102.8 258,103 260.9,103.1 263.8,103.3 267.9,102.1 271.9,100.9 275.2,101.4 278.6,101.9 281.3,103 284,104.2 286.8,105.3 282.1,107.7 277.4,110 273.5,110.8 269.7,111.5 265.8,112.3 259,118 256.9,122.3 259.5,124.6 262.3,126.9 266.2,127.9 270.2,129 271.3,135.7 275.7,132.4 278.1,126.9 282.5,124.7 283.6,120.1 284.8,115.7 289.1,114.6 292.1,115.7 295.1,116.9 298.2,118 297.3,121.6 301.1,120.9 304.8,120.1 307,123.5 309.4,126.9 313.4,131.5 314.7,136.4 310.1,138.4 306.3,139.1 302.5,139.7 298.7,140.4 294.9,141.1 296.6,143.8 294.9,146.1 298.6,147.2 302.4,148.4 302.6,150.7 296.7,153.5 290.7,156.4 290.8,153 286.7,154.3 282.5,155.7 280.1,160.3 272.5,163.4 268.2,168 265.2,175.7 258.3,179.7 252.3,185.5 252.4,190.2 252.6,194.9 251.3,199.1 249.2,196 247.3,188.3 242.7,187.2 235.6,187.9 230.9,188.4 226.3,189 218.7,193.7 216.7,201.9 215.3,206.6 218.9,214 224.9,214.5 229.7,208.9 237,207.7 234.3,215.9 232.3,220.6 236.9,220.8 241.4,221.1 242.5,225.3 240.9,232.3 245.3,237 249.5,235.8 253.5,237.7 254.5,238.1 257.9,233.5 265.3,229.5 266.1,233.5 269.4,229.9 273.3,233.5 277.4,233.3 281.5,233.2 286.6,233.5 289.5,238.1 295.5,244 302.7,245.1 306.7,248.6 309.8,254.5 308.7,258 312.8,260.3 317,262.1 321.1,263.8 325.8,264.4 330.4,265 336.7,269.7 340.4,270.9 341,279 337,283.7 333.5,289.6 333.3,294.2 333.2,298.9 331.9,304.8 330.1,309.4 323.3,312.5 319.5,315.6 315.8,318.8 316,324.6 311.4,331.6 308.4,337.5 303.9,339.4 298.9,338.7 302.7,343.3 302.6,347.3 298.2,348.2 293.8,349.2 293.4,352.6 291.8,355.9 292.7,361.4 290.7,365.3 289.1,369 290,374.4 289.6,379.6 297.8,384.5 295.2,386.3 288.8,385.6 282.7,378.3 279.3,371.7 276,365.1 274.7,360.5 273.4,355.9 271.9,350.2 270.5,344.5 271.3,338.7 272.2,332.8 271.2,328.1 270.4,323.5 270.7,318.8 271,314.1 270.6,307.7 270.2,301.3 265,297.7 259.8,294.2 255,286.1 252.6,281.4 250.3,276.7 245.6,272 246.9,265 245.8,263.1 247.8,256.8 249.9,254.5 253.1,248.6 253.5,241.6 252,238.8 247.2,240.9 242.1,238.6 237.2,234.6 236.4,231.1 233.6,227.6 229.7,226.4 225.7,225.3 220.1,220.4 215.9,221.3 209.1,218.7 204,215 199,211.2 200.1,207 195.2,198.4 189.9,190.2 186.7,183.9 188.6,189 190.5,197.2 192.1,204.2 187.8,200 185.2,192.5 183.2,184.4 182.7,181.8 181.4,178.5 177.8,177.1 177,170.3 177.6,163.4 179.8,157.6 185.6,149.5 187,145.2 190,145.4 188.9,141.6 185.2,139.3 187,131.5 187.5,126 184.7,122.7 181.7,119.9 178.6,119.7 175.5,119.5 171.6,117.8 164,121 163.5,118.4 156.6,121.6 148,124.9 142.6,126.7 137.2,128.6 128.1,131.5 134.4,129.3 140.6,127.1 148.7,122.7 146,122.2 143.3,121.6 142.2,118.4 149,113.6 158.8,110.2 155.8,110.1 152.8,110Z M401.6,174.3 399.7,178.5 396.3,180.4 393.6,185.5 394,186.9 390.1,191.8 386.6,194.9 383.9,197.2 380.8,202.4 378.6,208.9 379.9,212.4 380.4,217.1 379.3,220.6 377.2,223.6 378.8,226.4 378.5,229.2 381.2,231.1 383.2,233.5 385.6,235.8 387.3,239.8 390.3,242.1 394.4,246.3 397.5,247.7 402.7,246.1 408.9,246.8 415.1,244 418.2,243.3 422.3,243.3 425.4,247.9 428.5,247.5 430.9,247.5 432.8,251 433.2,255.7 432.2,259.2 431.6,261.5 435.7,266.2 437.7,269.7 438.3,273.2 440.2,278.6 440.7,284.9 437.6,291.9 437.1,297.7 438.4,301.3 440.2,305.9 441.9,310.6 442.5,315.3 443,320 445.9,324.9 448.2,330.5 448.8,336.3 449.1,338 452,339.4 457,337.5 462.8,337.5 466.9,335.6 472.2,331.2 475.2,327 477.8,323.9 478.8,318.8 483.8,315.3 484.8,309.4 483.6,304.8 487.2,301.3 493.6,296.6 496.5,291.9 496.4,287.2 496.2,282.5 494.4,274.4 493.8,269.7 496.6,263.8 498.7,261.5 501.8,256.8 503.8,253.8 507.9,251 512,246.3 514.9,240.5 517.4,233.5 518.3,230.4 513.6,231.6 509.5,232.5 505.5,233.5 501.3,230.4 498,226.4 494.4,222.5 491.9,218.7 489,214 487.3,207.7 483.9,202.4 480.4,194.9 477.3,188.3 481.3,193 482.5,189.5 486.8,197.2 490.8,202.4 493.1,208.2 496.4,214.5 499.8,220.6 501.4,225.3 502.4,228.3 505.3,228.1 512.3,225.3 519.2,221.8 525,217.1 528.9,214 531.6,210.1 533.8,205.4 530.9,202.8 526.4,199.8 525.8,196.5 524.4,198.4 519.7,201.4 516.6,200.7 515.6,197 513.6,197.2 512,194.9 508.3,189 509.2,187.9 513.4,190.2 515.7,192.8 522.1,196 525.6,194.6 528.4,197.9 532.4,198.5 536.5,199.1 541.5,198.8 546.5,198.6 549,202.4 552.4,205.6 555.8,209.4 560,208.4 560.9,213.6 563.1,220.6 566.4,228.1 570.4,237 572.6,239.1 574.5,237 577,233.5 577.6,227.6 576.9,221.8 580.9,219.2 584.8,214.7 588.5,211.2 589,207.7 592.9,206.6 596.8,205.2 599.1,207.7 600.5,210.1 604.2,214.7 605.9,220.6 608,221.1 611.9,219.4 613.2,225.3 615.1,229.9 615.6,235.8 615.4,239.3 619.1,242.8 620.4,248.6 622.5,252.2 626.7,255 628.1,254.5 626.6,249.8 625.4,245.1 623.2,243.5 620,240.5 618.7,235.8 616.8,233.5 617.9,226.4 619.9,228.1 623.3,229.9 625.7,233.5 629.1,237.7 632,235.3 636.4,231.6 636.9,226.4 635.3,221.8 630.3,217.1 628,213.6 629.1,210.1 631.5,207.7 635.2,207.7 636.4,210.5 637.6,207.7 642.4,206.1 648.1,204.2 651.4,200.7 652.6,197.2 653.3,192.5 654.9,187.9 652.1,185.5 649.9,182 646.1,177.3 646.2,173.8 649.3,171 645.8,169.6 642.5,171 639.3,168 637.9,166.8 640.5,164.5 643.3,162.7 645.1,167.3 646.2,164.5 649.6,165 653.2,169.2 656.7,170.3 658.9,176.2 661.6,177.1 664.4,175.5 663,171.5 659.4,168 655.9,165 658.6,162.2 658.7,159.2 659.8,156.9 664.5,154.1 666.2,148.4 665.7,142.7 661.2,137 660.4,134.1 655.2,132.1 651.2,132.6 646.7,130.8 646.3,127.1 649.1,123.8 650.4,121 656.2,121 661.3,120.3 664.5,120.2 667.7,120.1 668.6,117.9 669.4,115.7 672.7,115.1 675.9,114.6 677.3,120.6 682.9,127.1 688.6,134.4 691.3,140.4 692.6,134.8 688.8,127.1 684.8,120.6 687.9,119.1 691.5,118.1 695,117.1 696.4,115.7 697.7,114.2 699,112.7 695.4,109 689.4,104.9 683.3,100.9 679,100.1 674.8,99.3 671.6,99.2 668.5,99.1 665.3,99 663.1,99.4 660.8,99.9 656.9,99.8 653.1,99.7 648.1,98.4 643.2,97 639.8,97.2 636.4,97.4 632.1,96.4 627.9,95.5 623.6,94.5 620.6,94.4 617.5,94.3 614.5,94.2 612.4,94.8 610.4,95.4 608.3,96.1 603.8,95.1 599.3,94.2 593.3,92.3 591.1,92.7 588.8,93.2 585.3,93 581.8,92.7 578.4,92.5 574.9,92.3 571,91.4 562.5,86.8 558.8,86.1 555.2,85.4 551.6,84.7 550.2,85.7 548.8,86.7 547.2,87.7 544.6,87.8 542,87.9 539.4,88.1 537.6,89 535.7,89.9 532.9,90.4 530.1,90.9 527.2,91.4 524.5,93.2 520.9,93.2 516.8,91.5 512.4,90.4 512.3,94.2 510.4,98 507.6,98.3 504.8,98.6 502,99 499.7,98 497,99.6 494.3,101.3 489.4,99 485.9,102.9 482.7,102.4 479.4,101.9 478.8,102.3 481.3,106.9 478.7,108.5 476.1,110 471.7,111.3 467.9,110 468.8,106.5 472.6,106.4 476.4,106.3 476.1,104.5 473,102.9 469.4,102 465.9,101.2 462.4,100.3 458.6,98.8 454.8,97.2 450.3,96.8 446.5,97.9 442.7,99 439.2,100.4 435.7,101.9 433.1,105.9 430.4,111.1 425,113.6 421.1,116.3 421.3,121.6 423.1,123.6 427.2,123.2 430.4,120.6 432.2,122.7 434.3,127.1 435,129.3 437.4,129.5 440.3,127.7 440.8,124.9 443.7,120.6 441.3,117.4 441.2,114.2 445.6,111.5 447.3,108 451.1,107.3 453,109 450.4,111.6 447.6,114.2 448.3,118.4 453.4,119.3 459,118.4 462.9,119.7 459.4,120.6 455.7,120.9 452.1,121.2 453.3,123.8 453.7,126 449.3,125.3 448.9,128.2 449.6,130.4 447.3,131.7 445,130.8 440.8,131.9 437.4,133 432.1,132.6 430.3,130.8 431,128.2 430.7,124.7 427.4,126 427.1,129.3 428,132.6 425.2,133.7 421.7,134.4 420.9,136.4 419.2,138.4 416.2,139.3 415.7,141.1 413.4,142.5 410.8,142.9 409.8,142.2 410.1,144.7 407.6,144.3 404.5,145.2 405.4,146.5 408.4,147.7 410.8,150.7 410.6,155.3 409.6,156.6 405.5,156.6 401.8,156.3 398.1,156 395.6,157.6 396.4,159.9 396.3,163.4 394.8,167.3 396.1,169.4 395.6,171.5 398.5,171 400.6,172 402.1,173.8 404.3,172.2 409.1,172.2 411.7,170.1 413.4,167.3 412.4,165.7 414.7,162.7 419,160.1 418.6,156.9 421.4,156.6 424.2,157.3 427,155.7 429.3,154.3 432,155.5 433.7,158.7 436.6,161 439.5,162.2 442.9,164.5 443.2,169.2 444.6,168 445.9,166.8 444.6,164.3 445.7,163.4 448.2,164.3 447.1,162.9 443.2,161 442.2,159.9 439.3,158.7 438.2,156.2 435.8,154.1 435.7,152.3 438.3,151.6 438.6,153.4 440.8,154.1 443.8,156.4 447.7,158.7 449.8,160.3 450,163.4 451.5,165.7 453.3,168 454.5,171.5 456.5,172.7 457.3,170.3 459.1,169.2 456.6,166.8 457.7,164.1 459.4,162.4 462.7,162.7 463.4,163.8 463,165.7 464.8,168 465.7,171.5 468.1,172.2 472.1,173.1 476,173.6 478.8,173.1 482.6,172 482.6,175 483,177.3 481.7,181.3 480.7,184.8 476.8,185.1 473.2,184.4 470.3,186 463.3,184.1 458.2,182 452.4,183.2 451.6,187.2 447.6,185.5 443.5,183.2 438.5,181.1 434.6,180.1 433.5,177.3 434.3,172 432.3,170.8 428.5,171.7 422.7,172 418.8,172 413,174.1 409.1,175.9 403.3,175.5Z M404.6,122.5 408,122.5 406.3,124.7 409.6,124.7 408.7,127.1 407.9,128.2 410.3,129.3 412.1,131.7 413.2,133.7 416,135.5 415.7,137.3 413.9,138.2 415.5,138.8 413,139.7 409.8,140.2 406.7,140.9 402.8,141.3 405.5,138.8 407.7,138.2 403.8,137.7 406,135.9 404.8,134.1 407.8,133.9 407.8,132.6 407,130.8 404.4,131 404.8,128.6 403.1,127.1 403.7,124.9 404.3,123.2Z M402.7,129.9 402.5,133.7 401.7,136.6 397.9,137.9 395.3,137.5 396.4,134.4 395.6,132.1 398.3,131.5 399.2,129.9 401,129.7Z M377.3,111.1 375.5,108 379,106.1 382.1,106.3 385.1,106.5 390.1,106.3 391.9,108.6 389.3,110.4 383,112.3 378.8,111.5Z M488.8,96.1 494.8,97.8 498.3,97.4 492.5,92.3 494.6,91 496.6,89.8 498.6,88.6 501.1,87.7 503.6,86.8 506,85.9 503,86.4 500,86.8 497.6,87.7 495.1,88.6 492.6,89.5 490,90.4 489.5,93.2Z M537,82.5 540.8,82.9 544.6,83.3 547.9,83.3 551.1,83.3 547.6,81.7 543.9,80.9 540.2,80.1 536.7,79.3 534.8,79.8 532.9,80.4 531.1,80.9Z M602.1,88.6 607.9,90.2 613.8,91.7 615.8,90.9 617.7,90 619.6,89.1 615.6,88.4 611.6,87.7 608.4,87.7 605.2,87.7 602,87.7Z M674.2,150.7 676.2,149.5 670.2,142.7 673.8,143.8 668.4,138.7 662.7,133.7 660.7,131.9 661.4,133.7 665.4,139.3 671,146.1Z M668.7,178 670.4,175 675.9,174.3 676.7,170.8 679.8,170.3 680.1,165.7 678.4,162.7 680.4,161.3 684,165.7 684,169.2 686.3,174.5 685.2,176.2 683.5,177.1 680.2,177.1 679.4,179.7 676.6,177.8 672.7,177.8Z M677.4,161 678.7,158.7 683.2,159.9 685.2,157.1 681.9,155 674.8,152 677.2,156.4 675.2,157.6Z M667,179.7 670.2,179 672.5,182 671.9,185.5 670,184.8 668.3,181.3Z M673,180.8 672.8,178.5 675.7,178 676.4,179.2 674.8,180.4Z M655.3,204.2 656,199.1 658.2,199.5 657.6,206.6Z M633.8,213.1 636.5,211 638.3,212.2 635.8,215.4Z M658,220.6 658.1,214.7 661.5,214.7 661.8,218.7 663.7,224.8 667.2,227.6 666.2,228.3 661.8,225.7 659.7,224.1Z M663.1,229.5 665.7,228.8 669.8,228.8 671.4,232.3 670,234.6 666,236.5 663.5,233.5Z M654.2,238.4 658.6,231.3 659.3,232.7 655.1,239.1Z M664.3,241.6 667.2,237.9 671,235.1 673.5,240.5 671.7,244.4 668.5,242.1Z M638.1,254.5 639.1,253.3 642.2,253.8 646.2,250.5 651.2,245.8 654,241.6 658.8,245.6 656.4,247.5 655.9,251 658.3,255.7 655.7,258 653.5,263.8 652.3,267.4 649.3,266.2 643.1,265 640.1,261.5 638.5,258.7Z M609.5,244.9 614.1,245.8 620.1,253.3 626.7,259.2 628.7,263.8 631.8,265.5 631.1,271.6 628.4,271.8 624.1,267.4 620.5,261.5 616.8,254 611.1,249.1Z M629.8,273.9 632.5,272 636.6,273.2 641.8,273.2 645.2,274.1 648.8,276 648.6,278.3 641.5,277.2 635.4,276.2 630.4,274.4Z M649.7,277.2 653.9,277.2 658,277.2 662.6,277.2 667.2,277.2 667.1,278.8 662.5,278.8 657.9,278.8 653.7,278.8 649.6,278.8Z M668.1,279.7 674.4,277.6 672.2,279.7 668.3,281.8Z M658.6,266.2 658.2,264.3 659.8,256.8 660.8,255.7 666,255.7 670.9,254.5 667,257.1 661.4,257.1 663.9,260.1 667.6,260.1 664.9,262.2 666.3,268.5 663.2,268.5 662.8,264.3 661.3,264.8 661.5,270.9 659.4,270.9Z M683.5,261 689.7,259.9 692.6,265.7 697.9,261.7 704.1,264.1 711.2,266.9 714,270.9 717.6,272.5 715.8,275.5 721.3,282.1 716.2,281.4 713.6,277.2 709.6,275.8 707.2,279.3 703.1,279.3 699.2,276.9 697.1,270.9 689.5,267.1 685.5,264.5 688.6,263.1 685.5,262.4Z M576.9,234.9 578.8,235.8 581.7,240.2 581.6,243.3 579.2,244.4 577.4,242.1 577.1,238.8Z M514.2,286.1 516.2,294.2 513.8,298.9 511.9,304.8 509.9,310.6 507.8,316.5 503.3,317.6 501.1,312.9 501,308.3 503.4,302.4 502.7,297.7 508,294.7 511.3,289.6Z M432,128.8 434.5,127.9 434.5,129.7 433.4,130.6 432.3,129.9Z M429.8,129.5 431.2,129 431.8,130.1 430.2,130.4Z M443.6,125.5 444.8,124 445.1,125.1 444,126.2Z M441,127.5 441.9,125.1 441.7,127.7Z M449.5,123.2 451.9,122.5 451.3,124 450,123.8Z M445.2,119.5 446.7,118.6 446.5,119.7Z M436.8,169.2 442.9,168.5 442.2,172.2 437.5,170.1Z M428.5,162.2 431.4,162.2 431.4,166.6 429.1,166.8Z M429.2,159.9 430.6,157.6 430.9,161Z M458.7,175.5 464.2,175.7 460.7,176.4Z M475.9,176.2 480,174.8 479.1,177.1Z M642.4,309.4 642.1,314.1 641.6,318.8 641.4,327 639.9,331.6 638.2,336.3 642.7,339.8 648.6,338.5 654.5,337.3 660.9,333.5 666.2,332.6 671.4,331.6 676.1,334.7 677.6,339.4 683.4,335.2 680.2,341 683.7,341.7 683,346.8 689.2,347.8 692.7,349.4 701.9,345.7 705.4,341 713.3,332.8 718.9,324.6 720.5,316.5 717.6,310.6 715.5,308.3 710.7,302.4 710.3,294.2 706.8,290.7 705.8,283 703,288.4 701.7,296.6 699.2,299.1 693.7,295.9 690,293.1 693.6,286.5 686,284.9 680.8,286.1 677.8,293.1 674,290.7 668.6,293.1 664.6,298.9 659.9,302.4 655.5,304.4 651.1,306.4 644.5,309Z M687.4,353.1 694,353.6 690.2,358.4 686.4,359.8 686.2,356.8Z M750,338.4 750.6,343.3 752.7,344 756.5,346.1 751.1,349.9 743.7,355.2 743.3,354.3 746.9,350.3 745.1,349.6 749.9,344.5Z M740.7,352.6 742,355.2 736,359.6 730.8,361.9 722.8,366.7 719.3,365.3 726.7,360.7 735,356.1Z M241.1,206.8 247.6,204 251.6,204.2 256.3,207.3 262.5,210.8 258.8,211.5 255.3,210.1 253.2,207.7 248.3,205.9 243.2,206.8Z M261.4,215.2 265.3,211.5 270.9,211.9 273.9,214.5 268.4,216.4 261.6,215.9Z M253.7,215 258,215.4 256.2,216.6Z M276.3,214.7 279.5,215.2 277.6,216Z M305,147 309.4,142.5 313.8,137.9 313.2,142.7 316.4,143.8 316.9,147.2 315,149.1 311.5,148.4 306,148.4Z M184.3,139.7 186.6,142.6 189.1,145.4 187.1,144.3Z M239.2,97 249,92.8 252,92.7 255.1,92.6 258.1,92.4 261.1,92.3 261.5,95.6 262.4,99 255.9,101.9 253,101.8 250.1,101.7 247.2,101.6 244.3,101.4 241.4,101.3 239.4,99Z M231,95.3 237.8,93 244.5,90.8 246.7,91.5 249,92.3 243.6,94.2 238.1,96.1 232.6,97Z M302.2,94.2 304.6,95.4 307.1,96.7 309.7,98 312.2,99.9 314.8,102.6 317.6,105.3 317.1,106.9 311,109 307.6,114.2 303.1,114.2 298.7,114.2 295.7,112.9 292.7,111.7 289.7,110.4 295.4,107.7 300.9,104.9 298.5,103.9 296.1,102.9 293.7,101.4 291.3,99.9 287.2,98.6 284.8,97.3 282.6,96.1 286.9,94.3 291.3,92.7 295.5,92.3 299.7,91.9Z M290.7,86.8 293.8,86.8 296.9,86.8 300.1,86.8 303.2,86.8 306.3,86.8 316,81.7 319.5,80.9 323.1,80.1 326.6,79.3 330,78.6 333.4,77.9 336.7,77.2 334.4,77 332.1,76.8 329.8,76.6 327.6,76.5 325,76.6 322.4,76.7 319.8,76.9 317.2,77 314.5,77.2 311.9,77.3 309.3,77.4 306.6,77.6 304,77.7 301.3,77.9 296.8,79 292.1,80.1 290.9,83.7Z M284.5,90.1 287.3,90.1 290,90.2 292.7,90.2 295.5,90.3 298.2,90.4 301,90.4 302.6,87.2 299.9,87.1 297.3,87 294.7,86.9 292,86.8 288.7,87.4 285.2,88.1Z M269.6,95.1 274.1,94.6 278.5,94.2 285,91.7 281.5,91.7 278.1,91.6 274.6,91.5 270.7,92.6 266.8,93.6Z M251.4,87.7 253.8,88 256.3,88.3 258.8,88.6 261.3,88.9 263.8,89.2 266.3,89.5 265.1,88 264,86.4 260.9,86.8 257.7,87.1 254.6,87.4Z M273.6,88.6 277.1,88.6 280.5,88.6 282.2,85.9 278.9,86 275.6,86.2 272.3,86.3Z M286.7,83.3 289.3,83.3 292,83.3 294.6,83.3 297.2,83.3 302,79.3 299,79.3 296.1,79.3 293.1,79.3Z M275.4,110.6 278.7,110.4 282,110.2 285.2,110 284.7,112.1 280.4,112.6 276.1,113.1Z M317,83.3 321.5,81.6 325.9,79.9 329.6,79.3 333.3,78.7 336.9,78.1 340.5,77.6 343.5,77.4 346.5,77.3 349.4,77.2 352.4,77 355.3,76.9 358.4,76.7 361.5,76.6 364.5,76.5 367.5,76.3 370,76.6 372.4,76.8 374.9,77.1 377.4,77.3 379.9,77.6 382.3,78.3 384.7,79.1 387.2,79.9 384.8,84.9 378.7,91 373.7,98.4 368.8,100.2 363.9,102.1 359.9,103.7 355.8,105.3 351.7,106.9 347.4,110 343,113.1 339.4,116.7 334.4,113.1 333.1,108.8 331.9,104.5 334.3,97.2 333,94.1 332,91 329.8,89.3 327.7,87.7 325.8,86.1 323.5,85.4 321.3,84.7 319.1,84Z M304.1,377.4 310.7,377.8 309,379.6Z M142.7,100.9 145.7,101.9 147.2,103.4 148.9,104.9 149.4,106.9 140.9,110 139.9,108 132.9,109 129.1,110 135.8,105.4Z M214.2,450 206.9,442.9 246.7,442.2 233.4,440.7 220.1,438 229,436.3 218.7,434.1 208.3,431.9 212.8,429.2 218.7,426.7 231.9,426 252.6,425.2 273.2,423.7 290,423.7 299.2,422.7 311,423.7 312.4,420.1 311,416.4 313.9,412.7 311.7,409.7 315.4,406.8 322.8,403.1 319.8,406.5 316.1,410.9 317.6,414.9 324.2,419.3 325.7,425.2 309.5,428.9 297.7,430.4 306.5,433 313.9,436 328.7,437.5 339,438.9 356.7,437.8 368.5,434.8 375.8,430.4 383.2,426.7 392,422.3 400,420.1 413.8,419.9 434.4,417 456.8,416.1 472.2,415.3 484.3,411.8 494.6,409.6 504.9,411.3 518.7,413.5 515.2,418.7 523.8,415.3 540,411.8 557.2,409.9 574.4,409.6 591.6,409.9 612.2,409.9 629.4,411.3 643.2,415.6 658.7,419.9 646.6,424.2 650,424.4 615,437 622.4,441.4 630,450Z M252,87 259,86.5 260,89 253,90Z M266,86 275,84.5 281,86 282,92 276,93.5 268,92Z M247,83 255,82 256,84 248,85Z M262,80.5 270,79.5 272,81.5 263,82.5Z M284,85 305,84 305,91 285,91Z M289.2,80.3 327,77.6 329.7,84.5 313.5,87.2 294.6,88.5 283.8,86.5Z" fill="none" stroke="#000" stroke-width="2.6" stroke-linejoin="round"/>
<path d="M465.2,158.7 466.1,155.7 467.5,152.5 469.9,150 472.9,151.1 475.2,154.1 478.7,153 480.5,152.7 482.5,153.6 486.8,156.4 491.4,161 485,162.2 480.9,160.6 475.1,159.9 469.7,161.7 467.5,161.7Z M500.3,154.1 500.7,151.8 502.9,149.5 507.2,148.4 510.2,149.5 510.9,152.3 507.7,154.1 511.9,159.9 515.4,162.7 515.9,166.8 517.1,170.8 511.6,172.2 507.4,170.3 507.1,163.8 503.4,159.9Z M244.5,149.1 250.4,146.1 256.7,144.3 258,148.4 258,149.5 253.4,149.5 247.1,149.3Z M247.7,159.9 250.6,154.1 254.6,151.1 256.4,151.1 251.5,156.4 250.1,159.9Z M257.5,150.7 262.4,152.3 265.4,151.8 258.5,157.6 257.5,155.3Z M255.5,160.6 260.2,159.3 264.9,158 263.7,158.7 259.1,161Z M263.8,156.9 270.7,156.4 270.7,154.8 265.7,155.7Z M236.2,140.4 244.3,132.6 244.1,135.9 238.9,140.4Z M221.9,117.4 226.8,115.5 231.6,113.6 234.6,113.9 237.5,114.2 232.4,115.6 227.1,116.9Z M217.9,108 222.6,106.4 227.2,104.9 230.8,105.9 223.2,109 220.5,108.5Z M520.6,150.7 524.9,149.5 527.2,154.1 523.8,155.3Z" fill="#0080ff" stroke="#000" stroke-width="1.2"/>
<path clip-path="url(#mapclip)" d="M202.8,99.7 181.1,118.8 183.7,119.5 184.1,121.6 189.1,119.9 189.7,122.7 189,128.2 188.8,130.4 M190.5,143.8 241.2,143.8 241.6,142.9 250.4,146.1 258,149.5 260.6,152.3 257.6,159.9 265.1,157.6 270.6,155.3 274.7,153 280.7,153 284.8,149.1 286.8,147.5 288.9,147.7 288,151.4 288.8,153.4 M182.8,182 187.7,181.5 193.9,184.8 199.4,184.8 203.1,183.6 205.5,189 208.2,190.2 211.6,188.3 214.3,193.7 218.1,197.4 M224.4,224.1 224.6,222.2 227.2,220.6 228.7,216.4 231.6,216.4 233.4,214.7 M230.9,220.8 230.5,224.3 232.8,225.5 M242.9,222.9 237.9,225.7 234.1,227.6 M237,231.8 241.1,232.5 M242.5,235.8 243,238.8 M253.7,237.7 252.5,241.2 M265.2,231.1 263.7,240.5 268.8,241.6 273.9,243.5 273.1,247.5 274.1,253.3 274.9,255.2 M249.9,254.7 253,256.1 257.1,258 M247.3,265.9 250.1,269.7 252,265 257.1,260.3 257.5,258 M257.5,258.2 261.2,260.3 268.6,267.8 M268.6,267.8 269.5,255.7 274.7,255.2 274.9,255.2 M274.9,255.2 280.9,253.3 283.6,248.6 287.8,245.8 M287.8,245.8 286.4,244.2 289.5,238.1 M295.1,244.4 293.2,254.3 M287.8,245.8 289.6,248.6 290.1,255 293.2,254.3 300.5,252.6 304.6,252.2 306.5,248.2 M301.7,244.7 300.5,252.6 M268.6,267.8 262.6,275.1 261.8,280.2 268,283.7 270.3,283.7 278.7,280.9 283.8,287.2 289.1,290.3 290.1,296.1 294.3,296.6 296,300.1 295.3,304.8 M270.3,283.7 271.6,288.4 271.2,294.2 272.3,297.7 271.4,298.9 M269.8,300.8 271.4,298.9 273.9,303.6 275.4,308.3 277.8,311.3 281.6,309.4 286.5,309.9 M286.5,309.9 287.6,304.8 294.9,304.3 M295.3,304.8 296.4,309.9 300.3,310.1 303.4,317.6 M286.5,309.9 292.2,314.1 297.4,317.4 303.9,321.6 303.4,317.6 M303.4,317.6 305.4,319.3 301.7,323.5 298.9,328.6 303.3,330.2 308.7,336.8 M298.9,328.6 298.6,335.2 298.8,337.5 M277.8,311.3 275.2,315.3 276,321.1 274.6,328.1 275.6,335.2 276.3,342.2 277.2,349.2 277.8,356.1 280.7,363 281.5,369.5 281.6,374.4 285.3,377.8 291.4,379.6 M409.5,176.2 409.9,182 405.9,184.1 395.7,190.9 395.6,194.2 M386.7,193.2 395.6,193.2 M395.6,194.2 395.6,197.2 388.9,197.2 388.8,203.1 386.8,204.2 386.7,208.2 378.6,208.2 M395.6,194.2 403.4,199.5 415.4,208.9 419.7,213.6 421.5,213.1 424.8,212.6 437,203.1 M403.4,199.5 400.9,199.8 401.8,219.4 389.5,221.8 388,223.9 379.3,220.1 M429.6,171.7 429,177.3 430.7,183.2 431.8,187.4 433,197.2 437,203.1 M431.8,187.4 433.3,184.4 435.5,180.4 M462.3,184.1 463.5,206.6 463.7,211.2 461.7,211.2 461.7,212.4 445.3,203.3 443.3,204.2 441.3,205.4 437,203.1 M463.5,206.6 487.6,206.6 M443.3,204.2 444.4,210.1 440.6,225.3 437.6,226.4 429.4,227.6 420.4,230.6 M421.5,213.1 421.6,219.4 415,222.9 413.4,223.2 416.1,227.6 418.1,228.8 420.4,230.6 M413.4,223.2 408.9,224.1 403.8,229.9 401.7,233.5 M388,223.9 389.6,229 384.9,228.3 378.7,229 M389.6,229 394.5,229.9 396.6,233.5 401.7,233.5 M396.6,234.6 397.6,239.3 395.5,240.2 397.5,247.7 M406.8,246.1 407.2,235.8 407.5,232.3 413,232.3 415.5,243.7 M418.6,243.3 420.4,230.6 M385.6,235.8 390.4,234.6 391.4,238.1 390.3,242.1 M430.7,247.2 433.6,242.8 437.7,238.1 440.7,233.5 442.7,228.8 443.8,234.6 441.8,235.8 444.9,240.5 450.1,239.3 456.2,235.8 459.8,232.5 458.1,227.6 459,224.1 462,221.3 461.7,212.4 M444.9,240.5 442.9,246.3 446,252.9 451.2,249.8 459.4,248.2 464.6,246.3 469.7,246.3 462.4,238.1 459.8,232.5 M491.6,215.9 487.7,224.6 484.9,233.5 483,238.1 486.2,246.3 491.4,249.6 497.6,248.6 503.7,246.5 511.4,239.3 503.5,237 501.3,232.3 500,228.8 M487.7,224.6 494.8,224.1 500,228.8 M497.6,248.6 497.7,262 M483.1,248.2 485.3,255.7 483.2,260.3 493.9,269 M469.7,246.3 477,249.3 483.1,248.2 M477,249.3 474.1,261.3 474.1,268.5 475.8,277.4 480.9,280.2 483.8,284.9 496.2,282.5 M438.1,272 447,276 450.1,276.7 457.9,275.1 457.8,283.7 462.3,283.7 465.3,286.1 470.4,287.2 474,289.6 471.6,281.4 475.8,277.4 M438.2,269.7 446.4,262.7 450.2,253.3 451.2,249.8 M436.1,267.1 442.9,262.7 440.9,255 442.3,252.9 436.3,252.9 432.8,252.9 M462.3,283.7 458.1,288.4 457.9,295.9 460.5,298.9 455.7,300.1 441.5,298.7 437,298.4 M455.7,300.1 455.5,309.4 453.4,309.4 453.2,316 452.8,324.4 445.9,324.9 M453.2,316 459.2,317.2 464.2,317.9 467.4,314.1 472.2,309.9 468.7,305.9 464.5,299.6 470.1,297.3 475.1,294.5 480.3,297.3 480,303.6 477.7,308.3 476.2,310.4 477,320.7 M475.1,294.5 480.6,290.7 483.8,284.9 M396.4,159.9 400.7,160.3 399.9,162.2 399.6,165.7 399,168 398.5,171 M409.6,156.6 414.3,158 419,159 M417.4,139.1 420.5,141.6 423.4,142.7 427.8,143.8 426.8,147 424,150.2 425.9,151.8 427,155.7 M419,138.6 423.7,139.3 425.3,136.4 425.6,134.1 M423.7,139.3 424.1,141.1 M428,130.6 430.1,130.8 M437.7,132.8 438.7,135.9 439.7,139.3 435,140.9 437.4,144.3 436.7,147.2 431.2,147.2 430.3,147.2 426.8,147 M424,150.2 427.4,150.9 429.6,150.7 432.3,149.5 430.3,147.2 M432.2,148.8 435.3,148.4 438.1,149.5 438.1,151.6 M437.4,144.3 440.1,143.8 443.7,144.5 443.9,146.1 442.5,148.8 438.1,149.5 M439.7,139.3 442.5,140.9 446.8,142.7 453.8,143.6 M443.7,144.5 446.8,142.7 M453.8,143.6 455.9,140.4 454.6,137.5 453.9,132.8 452.5,131.7 447,131.7 M452.5,131.7 449.5,129.9 M443.9,146.1 447.2,146.5 453.4,145.2 453.8,143.6 M453.4,145.2 451.6,150 448,150.7 443.3,149.5 442.5,148.8 M438.1,151.8 441.5,150.9 443.3,149.5 M442.2,152.5 448.2,153 445.8,157.6 447.7,158.7 M448.2,153 449.4,156.4 447.7,158.7 M451.6,150 452.7,152.5 455.2,154.8 455.3,158.7 451.6,159.4 449.8,160.3 M451.8,162.2 454.6,162 456.5,161.5 462.1,161 462.9,162.7 M451,165.4 451.8,162.2 M462.1,161 465.7,159.9 M455.2,154.8 463.3,155.3 466.2,156 M453.4,145.2 461.1,145.6 465,151.8 467.7,152.3 M454.6,137.5 467.1,138.2 472.1,136.6 476.4,140.4 481.7,141.8 485.7,146.1 483.4,148.4 M453.9,132.8 458.4,128.8 461.2,127.9 467.5,131.5 468.4,135.9 472.1,136.6 M448.9,127.9 458.4,128.8 M453.9,124 459.4,124.7 459.4,120.8 M459.4,124.7 461.2,127.9 M459,118.4 463.6,113.6 459.3,106.9 458,103.5 455.8,100.9 456.1,99.2 M450.6,107.3 449.2,103.9 443.7,100.7 447.7,101.7 451.6,100.9 455.8,100.9 M443.7,100.7 439.9,102.3 437,106.5 435.5,111.1 432.7,115.2 433.6,119.5 432,121.6 M502.9,149.5 497.5,142.7 499.6,140.4 503.8,139.3 512.1,140.2 521.7,139.7 520.3,135.9 518.2,132.6 526.2,131 531.5,129.3 535.4,130.4 541,133 546,132.6 550.3,135.9 556.3,139.3 561.6,139.3 569.6,143.6 M569.6,143.6 569.3,148.4 564.6,147.9 565.3,152 561.1,153 563.8,158.7 M571.2,143.4 577.1,140 586.1,137 589.6,141.6 602.6,140.9 608.4,143.1 616.9,140.9 622.1,142 M571.2,143.4 578.5,148.4 579.3,152.3 593.1,158.3 602.7,158.7 611.3,161 620.5,156.9 620.3,153 625.8,149.5 632.6,149.1 627.4,146.1 622.1,142 M622.1,142 624.2,135.9 627.7,133.7 640.6,141.6 651.3,146.5 657.6,145.2 660.1,153 655.6,153.2 658.3,158.7 655.9,159.9 651.6,162.2 649.6,165 M656.3,169.6 658.9,167.8 M512.7,159.4 518.9,161.5 521,151.8 526.3,154.3 528.8,156.4 533.3,156 537.3,159.9 542.9,162.9 546,160.6 546.3,158.7 551.4,157.1 563.8,158.7 M518.9,161.5 526.3,161 531.3,165.7 539.2,170.3 M517.1,170.8 523.5,169.2 531,172.7 532.5,175 538,173.4 539.2,170.3 544.3,171.5 550.9,170.8 556.5,170.3 M542.9,162.9 547.5,165.7 553.2,165.7 555.4,163.4 563.8,158.7 M556.5,170.3 553.2,165.7 M532.5,175 531.5,179.7 532.9,184.4 535.2,185.8 536.1,189 539.1,189.3 544.9,188.1 550.1,184.4 551.8,178.5 551.6,173.8 556.5,170.3 M535.2,185.8 535.3,190.2 538.9,194.4 537.3,197.2 536.7,199.1 M550.4,202.6 555.8,200.7 552.7,193 556.4,191.4 559.6,187.2 559.5,182 557.4,177.3 562.6,175 567.8,176.2 568.2,183.2 572.3,186.7 574.5,187.4 M573.1,190.2 580.8,193.7 589.4,196 588.6,193 578,189.7 574.5,187.4 M590.5,194.4 596.7,193.7 606.4,192.1 M590.9,206.6 592.2,201.9 590.4,199.5 592.3,196.5 598.7,199.5 598.5,203.1 600.3,208.9 M599.6,208.4 601.5,203.1 602.7,198.4 604,194.9 606.4,192.1 610.7,198.4 612.8,204.2 617.8,207.7 615.7,210.5 611.9,214.7 614.8,219.4 614.2,227.1 615.7,234.6 M617.8,207.7 619.4,205.6 625.9,204.2 631.5,207.7 M619.4,205.6 622.8,210.1 625.5,214.7 630.3,219.4 632.9,224.1 630.6,231.1 627.7,233.5 M615.7,210.5 618.7,217.1 624.7,216.4 628.9,224.6 623,226.4 623.3,229.9 M619.3,242.8 623.4,243.5 M482.6,172 484.6,172.4 490.2,171.5 494.6,171 499.4,170.8 497.9,168 498.4,165.2 M491.4,161 495.3,162 496,164.5 498.4,165.2 502,167.1 505,168 506.8,168.2 M487.5,156.4 492.5,157.1 498.4,158.7 503.5,160.3 M495.3,162 501,162.2 M499.4,170.8 502.6,176.2 501.9,178.5 506.5,183.2 509.2,187.9 M494.6,171 493,177.3 489,179.9 490.1,182.7 486,184.4 488.2,186.7 487.4,187.9 482.5,189.3 M490.1,182.7 496,185.5 501.8,189.7 505.5,190 509.6,191.4 M483,177.3 485,180.8 482.9,181.5 483.2,185.5 482.5,189 M480.5,184.8 482.3,189 M500.3,219.7 503.7,217.6 508.8,218.5 518.7,213.6 524.6,211.2 525,204.9 517.7,201.9 516.6,200.7 M518.7,213.6 521.3,219.2 M525,204.9 526.2,199.8 M639.3,253.6 642.2,255.7 649.4,254.5 651.4,251 654.4,247.9 M704.1,264.1 703.1,279.3 M128.1,131.5 119.7,133.7 110.6,135.7 101.9,137.3 93.8,138.2 M715.6,135 723.4,136.6 732.2,138.2 M728.7,267.8 726.4,270.9 722.2,272.5 719.2,270.9 M732.4,273.2 736.2,276.7 741,280.2 744.9,282.5 M745.4,305.9 750.3,310.6 M774.6,298.9 778.2,296.6 M433.1,81.7 439.2,80.6 M474.1,80.1 478.8,79.6 486.8,80.1 492.2,80.4 M254.8,196 257.4,198.4 260,201.9 263.5,205.4 M281,215.2 285.6,217.8 287.4,220.6 288.2,224.1 287.6,227.6 286.4,229.7 M285.5,182.7 286,182.2 M676.4,253.8 677.3,256.8 678.4,259.9 M677.2,265.5 682.3,266.2 M673,265.7 675.1,266.2 M90.5,205.5 94,207.5 96,209 98.5,212.5 M87.5,252.8 88.8,253.6 M60.5,266.5 61.5,266.9 M224,259 225,259.6 M51,289 53,289.5 M59.5,290 61.5,290.4 M88,302 91,303 M94,308.5 95.3,309.4 M72,285 73,285.5 M353.6,165.5 356,166 M362,169 364,169.8 M377.5,191 380,191.5 M384,193 386.4,193.6 M361,218 362,218.8 M563,241 563.5,244 M564.5,250 565.4,254 M524.2,305.5 525.5,306 M529,307 530.3,307.5 M507.3,280.8 508.3,281.2 M561.7,346.2 563,346.6 M603.3,226 603.6,232 M668.4,196 669.4,196.5 M708.9,215.6 710,216 M710.3,223 710.5,225 M696.3,235.2 697.5,235.6 M757.8,245 758.8,245.6 M769,251.5 769.5,253 M774.5,286.9 775.5,287.3 M724,264.5 730,270 737,276 744,281" fill="none" stroke="#000" stroke-width="1.2" stroke-linecap="square" shape-rendering="crispEdges"/>
<path d="M610.8,69.4 613.5,70.1 616.3,70.9 619.3,71.8 622.4,72.8 625.7,74 629.2,75.2 632.7,76.5 636.4,77.9 640.1,79.3 644,80.9 647.9,82.5 651.8,84.2 655.7,85.9 659.5,87.7 663.3,89.5 666.9,91.4 670.3,93.2 673.7,95.1 676.9,97 680.1,99 683.3,100.9 686.4,102.9 689.4,104.9 692.4,106.9 695.4,109 698.4,111.1 701.3,113.1 704.2,115.2 707.1,117.4 709.9,119.5 712.7,121.6 715.4,123.8 718.1,126 720.8,128.2 723.4,130.4 726,132.6 728.5,134.8 731,137 733.3,139.3 735.6,141.6 737.9,143.8 740,146.1 742.1,148.4 744.2,150.7 746.2,153 748.1,155.3 750.1,157.6 752,159.9 753.8,162.2 755.6,164.5 757.3,166.8 758.9,169.2 760.5,171.5 762,173.8 763.4,176.2 764.8,178.5 766.2,180.8 767.5,183.2 768.7,185.5 769.9,187.9 771,190.2 772,192.5 773,194.9 773.9,197.2 774.7,199.5 775.5,201.9 776.2,204.2 776.9,206.6 777.5,208.9 778.1,211.2 778.8,213.6 779.4,215.9 779.9,218.3 780.5,220.6 781,222.9 781.5,225.3 782,227.6 782.3,229.9 782.7,232.3 783,234.6 783.3,237 783.6,239.3 783.8,241.6 784,244 784.2,246.3 784.4,248.6 784.5,251 784.6,253.3 784.7,255.7 784.8,258 784.7,260.3 784.6,262.7 784.5,265 784.4,267.4 784.2,269.7 784,272 783.8,274.4 783.6,276.7 783.3,279 783,281.4 782.7,283.7 782.3,286.1 782,288.4 781.5,290.7 781,293.1 780.5,295.4 779.9,297.7 779.4,300.1 778.8,302.4 778.1,304.8 777.5,307.1 776.9,309.4 776.2,311.8 775.5,314.1 774.7,316.5 773.9,318.8 773,321.1 772,323.5 771,325.8 769.9,328.1 768.7,330.5 767.5,332.8 766.2,335.2 764.8,337.5 763.4,339.8 762,342.2 760.5,344.5 758.9,346.8 757.3,349.2 755.6,351.5 753.8,353.8 752,356.1 750.1,358.4 748.1,360.7 746.2,363 744.2,365.3 742.1,367.6 740,369.9 737.9,372.2 735.6,374.4 733.3,376.7 731,379 728.5,381.2 726,383.4 723.4,385.6 720.8,387.8 718.1,390 715.4,392.2 712.7,394.4 709.9,396.5 707.1,398.6 704.2,400.8 701.3,402.9 698.4,404.9 695.4,407 692.4,409.1 689.4,411.1 686.4,413.1 683.3,415.1 680.1,417 676.9,419 673.7,420.9 670.3,422.8 666.9,424.6 663.3,426.5 659.5,428.3 655.7,430.1 651.8,431.8 647.9,433.5 644,435.1 640.1,436.7 636.4,438.1 632.7,439.5 629.2,440.8 625.7,442 622.4,443.2 619.3,444.2 616.3,445.1 613.5,445.9 610.8,446.6 215.2,446.6 212.5,445.9 209.7,445.1 206.7,444.2 203.6,443.2 200.3,442 196.8,440.8 193.3,439.5 189.6,438.1 185.9,436.7 182,435.1 178.1,433.5 174.2,431.8 170.3,430.1 166.5,428.3 162.7,426.5 159.1,424.6 155.7,422.8 152.3,420.9 149.1,419 145.9,417 142.7,415.1 139.6,413.1 136.6,411.1 133.6,409.1 130.6,407 127.6,404.9 124.7,402.9 121.8,400.8 118.9,398.6 116.1,396.5 113.3,394.4 110.6,392.2 107.9,390 105.2,387.8 102.6,385.6 100,383.4 97.5,381.2 95,379 92.7,376.7 90.4,374.4 88.1,372.2 86,369.9 83.9,367.6 81.8,365.3 79.8,363 77.9,360.7 75.9,358.4 74,356.1 72.2,353.8 70.4,351.5 68.7,349.2 67.1,346.8 65.5,344.5 64,342.2 62.6,339.8 61.2,337.5 59.8,335.2 58.5,332.8 57.3,330.5 56.1,328.1 55,325.8 54,323.5 53,321.1 52.1,318.8 51.3,316.5 50.5,314.1 49.8,311.8 49.1,309.4 48.5,307.1 47.9,304.8 47.2,302.4 46.6,300.1 46.1,297.7 45.5,295.4 45,293.1 44.5,290.7 44,288.4 43.7,286.1 43.3,283.7 43,281.4 42.7,279 42.4,276.7 42.2,274.4 42,272 41.8,269.7 41.6,267.4 41.5,265 41.4,262.7 41.3,260.3 41.2,258 41.3,255.7 41.4,253.3 41.5,251 41.6,248.6 41.8,246.3 42,244 42.2,241.6 42.4,239.3 42.7,237 43,234.6 43.3,232.3 43.7,229.9 44,227.6 44.5,225.3 45,222.9 45.5,220.6 46.1,218.3 46.6,215.9 47.2,213.6 47.9,211.2 48.5,208.9 49.1,206.6 49.8,204.2 50.5,201.9 51.3,199.5 52.1,197.2 53,194.9 54,192.5 55,190.2 56.1,187.9 57.3,185.5 58.5,183.2 59.8,180.8 61.2,178.5 62.6,176.2 64,173.8 65.5,171.5 67.1,169.2 68.7,166.8 70.4,164.5 72.2,162.2 74,159.9 75.9,157.6 77.9,155.3 79.8,153 81.8,150.7 83.9,148.4 86,146.1 88.1,143.8 90.4,141.6 92.7,139.3 95,137 97.5,134.8 100,132.6 102.6,130.4 105.2,128.2 107.9,126 110.6,123.8 113.3,121.6 116.1,119.5 118.9,117.4 121.8,115.2 124.7,113.1 127.6,111.1 130.6,109 133.6,106.9 136.6,104.9 139.6,102.9 142.7,100.9 145.9,99 149.1,97 152.3,95.1 155.7,93.2 159.1,91.4 162.7,89.5 166.5,87.7 170.3,85.9 174.2,84.2 178.1,82.5 182,80.9 185.9,79.3 189.6,77.9 193.3,76.5 196.8,75.2 200.3,74 203.6,72.8 206.7,71.8 209.7,70.9 212.5,70.1 215.2,69.4Z" fill="none" stroke="#000" stroke-width="1.5"/>
</svg>
<div id="title"><span style="position:absolute;left:10.1px;top:0;transform:scaleX(1.132);transform-origin:0 0">MapXtreme</span><span style="position:absolute;left:132.1px;top:0;transform:scaleX(1.180);transform-origin:0 0">®</span><span style="position:absolute;left:153.1px;top:0;transform:scaleX(1.143);transform-origin:0 0">SDK</span><span style="position:absolute;left:204.2px;top:0;transform:scaleX(1.168);transform-origin:0 0">Developer</span><span style="position:absolute;left:314.4px;top:0;transform:scaleX(1.143);transform-origin:0 0">License,</span><span style="position:absolute;left:405.4px;top:0;transform:scaleX(1.173);transform-origin:0 0">©</span><span style="position:absolute;left:424.7px;top:0;transform:scaleX(1.144);transform-origin:0 0">2012</span><span style="position:absolute;left:481.2px;top:0;transform:scaleX(1.140);transform-origin:0 0">Pitney</span><span style="position:absolute;left:553.7px;top:0;transform:scaleX(1.071);transform-origin:0 0">Bowes</span><span style="position:absolute;left:622.3px;top:0;transform:scaleX(1.158);transform-origin:0 0">Software</span><span style="position:absolute;left:715.6px;top:0;transform:scaleX(1.213);transform-origin:0 0">Inc.</span></div>
<div class="btn" style="left:6px;width:163px;">Apply Range Theme</div>
<div class="btn" style="left:196px;width:180px;">Apply Range with color</div>
<div class="btn" style="left:403px;width:131px;">Apply Individual</div>
</body></html>
